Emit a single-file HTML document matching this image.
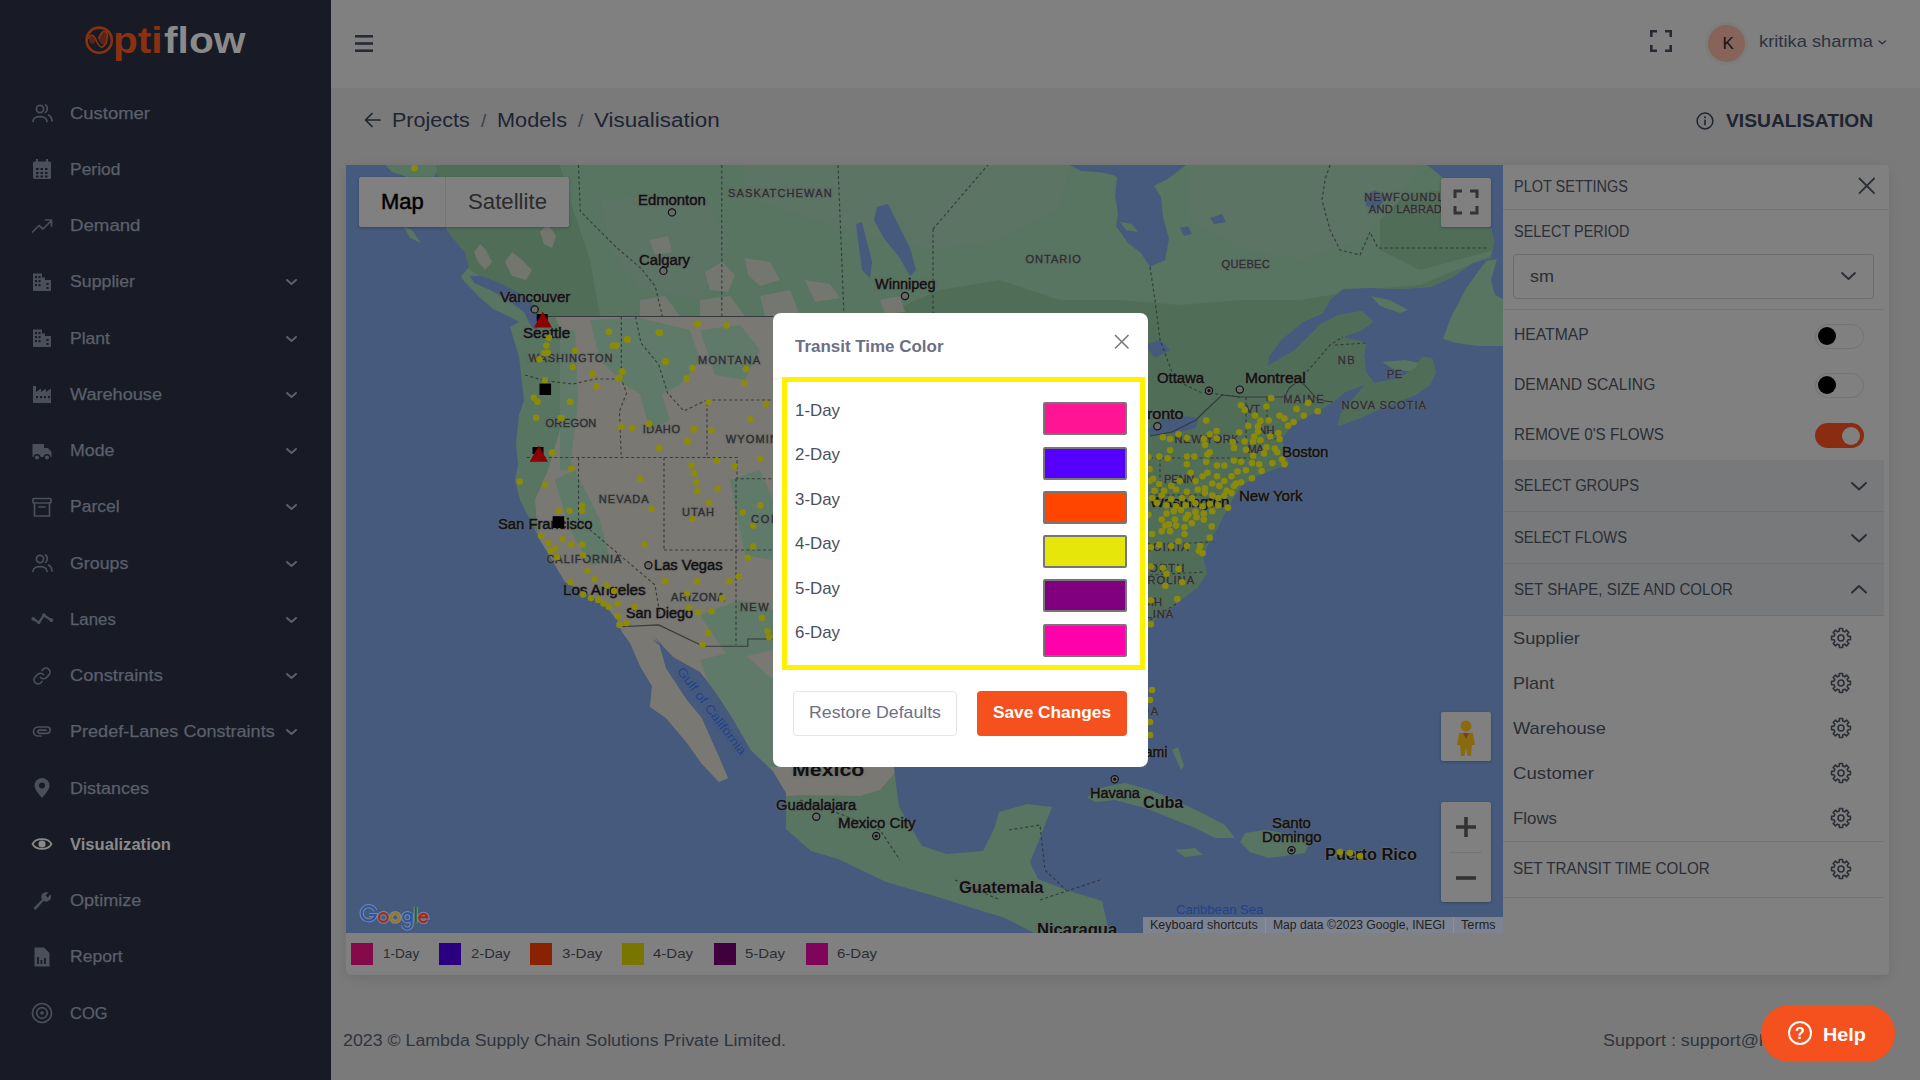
<!DOCTYPE html>
<html><head><meta charset="utf-8"><title>Optiflow - Visualisation</title>
<style>
html,body{margin:0;padding:0;width:1920px;height:1080px;overflow:hidden;background:#7a7a7a;font-family:"Liberation Sans",sans-serif}
.t{position:absolute;white-space:pre}
svg{position:absolute;overflow:visible}
</style></head><body>
<div id="sb" style="position:absolute;left:0;top:0;width:331px;height:1080px;background:#181b25"></div>
<svg style="left:85.00px;top:26.00px" width="29" height="29" viewBox="0 0 29 29"><circle cx="14.2" cy="14.2" r="12.6" fill="none" stroke="#8a3210" stroke-width="2.6"/><path d="M3.5 13 C5 7 9 9 11 14 C13 19 16 23 19 20 C22 17 24 9 21 6 C18 3 15 9 13.5 13" fill="none" stroke="#8a3210" stroke-width="1.6"/><path d="M4 12 C6 9 9 11 10.5 15 C9 19 6 18 4.5 16Z M13 12 C15 7 19 4 22 7 C24 10 22 17 19.5 20 C17 18 14 16 13 12Z" fill="#8a3210" opacity="0.55"/></svg><span class="t" style="left:112.50px;top:23.20px;font-family:'Liberation Sans';font-size:36px;line-height:36px;font-weight:700;color:#8a3210;transform-origin:0 30.60px;transform:scaleX(1.1254);">pti</span><span class="t" style="left:163.50px;top:23.20px;font-family:'Liberation Sans';font-size:36px;line-height:36px;font-weight:700;color:#8a8a8a;transform-origin:0 30.60px;transform:scaleX(1.1322);">flow</span>
<span class="t" style="left:70.00px;top:105.60px;font-family:'Liberation Sans';font-size:16px;line-height:16px;font-weight:400;color:#5b5f6b;transform-origin:0 13.60px;transform:scaleX(1.1534);-webkit-text-stroke:0.25px #5b5f6b;">Customer</span>
<svg style="left:31.00px;top:102.20px" width="22" height="22" viewBox="0 0 22 22"><circle cx="9" cy="7" r="3.6" fill="none" stroke="#4b4f5b" stroke-width="1.7" stroke-linecap="round" stroke-linejoin="round"/><path d="M2 19.5 C2 13 16 13 16 19.5" fill="none" stroke="#4b4f5b" stroke-width="1.7" stroke-linecap="round" stroke-linejoin="round"/><path d="M14.5 3 C17 4.5 17 9 14.5 10.5 M17.5 13 C20 14.5 21 17 21 19" fill="none" stroke="#4b4f5b" stroke-width="1.7" stroke-linecap="round" stroke-linejoin="round"/></svg>
<span class="t" style="left:70.00px;top:161.85px;font-family:'Liberation Sans';font-size:16px;line-height:16px;font-weight:400;color:#5b5f6b;transform-origin:0 13.60px;transform:scaleX(1.0919);-webkit-text-stroke:0.25px #5b5f6b;">Period</span>
<svg style="left:31.00px;top:158.45px" width="22" height="22" viewBox="0 0 22 22"><rect x="2" y="3.5" width="18" height="17.5" rx="1.5" fill="#4b4f5b"/><rect x="5" y="1" width="2" height="4" fill="#4b4f5b"/><rect x="15" y="1" width="2" height="4" fill="#4b4f5b"/><rect x="5" y="10" width="2.5" height="2" fill="#181b25"/><rect x="9.5" y="10" width="2.5" height="2" fill="#181b25"/><rect x="14" y="10" width="2.5" height="2" fill="#181b25"/><rect x="5" y="14" width="2.5" height="2" fill="#181b25"/><rect x="9.5" y="14" width="2.5" height="2" fill="#181b25"/><rect x="14" y="14" width="2.5" height="2" fill="#181b25"/><rect x="5" y="17.5" width="2.5" height="2" fill="#181b25"/><rect x="9.5" y="17.5" width="2.5" height="2" fill="#181b25"/><rect x="14" y="17.5" width="2.5" height="2" fill="#181b25"/></svg>
<span class="t" style="left:70.00px;top:218.10px;font-family:'Liberation Sans';font-size:16px;line-height:16px;font-weight:400;color:#5b5f6b;transform-origin:0 13.60px;transform:scaleX(1.1656);-webkit-text-stroke:0.25px #5b5f6b;">Demand</span>
<svg style="left:31.00px;top:214.70px" width="22" height="22" viewBox="0 0 22 22"><path d="M1.5 17 L8 10.5 L12 14 L20 6 M14.5 5 H20.5 V11" fill="none" stroke="#4b4f5b" stroke-width="1.7" stroke-linecap="round" stroke-linejoin="round"/></svg>
<span class="t" style="left:70.00px;top:274.35px;font-family:'Liberation Sans';font-size:16px;line-height:16px;font-weight:400;color:#5b5f6b;transform-origin:0 13.60px;transform:scaleX(1.1073);-webkit-text-stroke:0.25px #5b5f6b;">Supplier</span>
<svg style="left:31.00px;top:270.95px" width="22" height="22" viewBox="0 0 22 22"><path d="M2 20 V2.5 H11 V6.5 H14 V9 H20 V20Z" fill="#4b4f5b"/><rect x="4" y="5" width="2" height="2.2" fill="#181b25"/><rect x="7.5" y="5" width="2" height="2.2" fill="#181b25"/><rect x="4" y="9" width="2" height="2.2" fill="#181b25"/><rect x="7.5" y="9" width="2" height="2.2" fill="#181b25"/><rect x="4" y="13" width="2" height="2.2" fill="#181b25"/><rect x="7.5" y="13" width="2" height="2.2" fill="#181b25"/><rect x="15.5" y="12" width="2" height="2" fill="#181b25"/><rect x="15.5" y="16" width="2" height="2" fill="#181b25"/></svg>
<svg style="left:285.80px;top:279.40px" width="11" height="6.5" viewBox="0 0 11 6.5"><path d="M1 1 L5.50 5.00 L10.00 1" fill="none" stroke="#5b5f6b" stroke-width="2" stroke-linecap="round" stroke-linejoin="round"/></svg>
<span class="t" style="left:70.00px;top:330.60px;font-family:'Liberation Sans';font-size:16px;line-height:16px;font-weight:400;color:#5b5f6b;transform-origin:0 13.60px;transform:scaleX(1.0968);-webkit-text-stroke:0.25px #5b5f6b;">Plant</span>
<svg style="left:31.00px;top:327.20px" width="22" height="22" viewBox="0 0 22 22"><path d="M2 20 V2.5 H11 V6.5 H14 V9 H20 V20Z" fill="#4b4f5b"/><rect x="4" y="5" width="2" height="2.2" fill="#181b25"/><rect x="7.5" y="5" width="2" height="2.2" fill="#181b25"/><rect x="4" y="9" width="2" height="2.2" fill="#181b25"/><rect x="7.5" y="9" width="2" height="2.2" fill="#181b25"/><rect x="4" y="13" width="2" height="2.2" fill="#181b25"/><rect x="7.5" y="13" width="2" height="2.2" fill="#181b25"/><rect x="15.5" y="12" width="2" height="2" fill="#181b25"/><rect x="15.5" y="16" width="2" height="2" fill="#181b25"/></svg>
<svg style="left:285.80px;top:335.65px" width="11" height="6.5" viewBox="0 0 11 6.5"><path d="M1 1 L5.50 5.00 L10.00 1" fill="none" stroke="#5b5f6b" stroke-width="2" stroke-linecap="round" stroke-linejoin="round"/></svg>
<span class="t" style="left:70.00px;top:386.85px;font-family:'Liberation Sans';font-size:16px;line-height:16px;font-weight:400;color:#5b5f6b;transform-origin:0 13.60px;transform:scaleX(1.1325);-webkit-text-stroke:0.25px #5b5f6b;">Warehouse</span>
<svg style="left:31.00px;top:383.45px" width="22" height="22" viewBox="0 0 22 22"><path d="M2 20 V3 H5 V9 L10 5.5 V9 L15 5.5 V9 L20 5.5 V20Z" fill="#4b4f5b"/><rect x="5" y="13" width="2" height="2.2" fill="#181b25"/><rect x="9" y="13" width="2" height="2.2" fill="#181b25"/><rect x="13" y="13" width="2" height="2.2" fill="#181b25"/><rect x="17" y="13" width="2" height="2.2" fill="#181b25"/></svg>
<svg style="left:285.80px;top:391.90px" width="11" height="6.5" viewBox="0 0 11 6.5"><path d="M1 1 L5.50 5.00 L10.00 1" fill="none" stroke="#5b5f6b" stroke-width="2" stroke-linecap="round" stroke-linejoin="round"/></svg>
<span class="t" style="left:70.00px;top:443.10px;font-family:'Liberation Sans';font-size:16px;line-height:16px;font-weight:400;color:#5b5f6b;transform-origin:0 13.60px;transform:scaleX(1.1091);-webkit-text-stroke:0.25px #5b5f6b;">Mode</span>
<svg style="left:31.00px;top:439.70px" width="22" height="22" viewBox="0 0 22 22"><path d="M1.5 4 H13 V8 H17 L20.5 12 V17 H1.5Z" fill="#4b4f5b"/><circle cx="6" cy="17.5" r="2.8" fill="#4b4f5b" stroke="#181b25" stroke-width="1.5"/><circle cx="16" cy="17.5" r="2.8" fill="#4b4f5b" stroke="#181b25" stroke-width="1.5"/></svg>
<svg style="left:285.80px;top:448.15px" width="11" height="6.5" viewBox="0 0 11 6.5"><path d="M1 1 L5.50 5.00 L10.00 1" fill="none" stroke="#5b5f6b" stroke-width="2" stroke-linecap="round" stroke-linejoin="round"/></svg>
<span class="t" style="left:70.00px;top:499.35px;font-family:'Liberation Sans';font-size:16px;line-height:16px;font-weight:400;color:#5b5f6b;transform-origin:0 13.60px;transform:scaleX(1.0957);-webkit-text-stroke:0.25px #5b5f6b;">Parcel</span>
<svg style="left:31.00px;top:495.95px" width="22" height="22" viewBox="0 0 22 22"><rect x="2" y="2.5" width="18" height="4.5" rx="1" fill="none" stroke="#4b4f5b" stroke-width="1.7" stroke-linecap="round" stroke-linejoin="round"/><path d="M3.5 7 V20 H18.5 V7 M8 11 H14" fill="none" stroke="#4b4f5b" stroke-width="1.7" stroke-linecap="round" stroke-linejoin="round"/></svg>
<svg style="left:285.80px;top:504.40px" width="11" height="6.5" viewBox="0 0 11 6.5"><path d="M1 1 L5.50 5.00 L10.00 1" fill="none" stroke="#5b5f6b" stroke-width="2" stroke-linecap="round" stroke-linejoin="round"/></svg>
<span class="t" style="left:70.00px;top:555.60px;font-family:'Liberation Sans';font-size:16px;line-height:16px;font-weight:400;color:#5b5f6b;transform-origin:0 13.60px;transform:scaleX(1.1111);-webkit-text-stroke:0.25px #5b5f6b;">Groups</span>
<svg style="left:31.00px;top:552.20px" width="22" height="22" viewBox="0 0 22 22"><circle cx="9" cy="7" r="3.6" fill="none" stroke="#4b4f5b" stroke-width="1.7" stroke-linecap="round" stroke-linejoin="round"/><path d="M2 19.5 C2 13 16 13 16 19.5" fill="none" stroke="#4b4f5b" stroke-width="1.7" stroke-linecap="round" stroke-linejoin="round"/><path d="M14.5 3 C17 4.5 17 9 14.5 10.5 M17.5 13 C20 14.5 21 17 21 19" fill="none" stroke="#4b4f5b" stroke-width="1.7" stroke-linecap="round" stroke-linejoin="round"/></svg>
<svg style="left:285.80px;top:560.65px" width="11" height="6.5" viewBox="0 0 11 6.5"><path d="M1 1 L5.50 5.00 L10.00 1" fill="none" stroke="#5b5f6b" stroke-width="2" stroke-linecap="round" stroke-linejoin="round"/></svg>
<span class="t" style="left:70.00px;top:611.85px;font-family:'Liberation Sans';font-size:16px;line-height:16px;font-weight:400;color:#5b5f6b;transform-origin:0 13.60px;transform:scaleX(1.0506);-webkit-text-stroke:0.25px #5b5f6b;">Lanes</span>
<svg style="left:31.00px;top:608.45px" width="22" height="22" viewBox="0 0 22 22"><path d="M2.3 10.8 L7.9 14.6 L12.9 7.2 L20.4 12.2" fill="none" stroke="#4b4f5b" stroke-width="2.3" stroke-linejoin="round"/><circle cx="2.3" cy="10.8" r="1.9" fill="#4b4f5b"/><circle cx="12.9" cy="7.2" r="1.9" fill="#4b4f5b"/><circle cx="20.4" cy="12.2" r="1.9" fill="#4b4f5b"/><circle cx="7.9" cy="14.6" r="1.6" fill="#4b4f5b"/></svg>
<svg style="left:285.80px;top:616.90px" width="11" height="6.5" viewBox="0 0 11 6.5"><path d="M1 1 L5.50 5.00 L10.00 1" fill="none" stroke="#5b5f6b" stroke-width="2" stroke-linecap="round" stroke-linejoin="round"/></svg>
<span class="t" style="left:70.00px;top:668.10px;font-family:'Liberation Sans';font-size:16px;line-height:16px;font-weight:400;color:#5b5f6b;transform-origin:0 13.60px;transform:scaleX(1.1468);-webkit-text-stroke:0.25px #5b5f6b;">Constraints</span>
<svg style="left:31.00px;top:664.70px" width="22" height="22" viewBox="0 0 22 22"><path d="M9.5 12.5 A4 4 0 0 0 15 12.8 L18 9.8 A4 4 0 0 0 12.3 4.2 L11 5.5 M12.5 9.5 A4 4 0 0 0 7 9.2 L4 12.2 A4 4 0 0 0 9.7 17.8 L11 16.5" fill="none" stroke="#4b4f5b" stroke-width="1.7" stroke-linecap="round" stroke-linejoin="round"/></svg>
<svg style="left:285.80px;top:673.15px" width="11" height="6.5" viewBox="0 0 11 6.5"><path d="M1 1 L5.50 5.00 L10.00 1" fill="none" stroke="#5b5f6b" stroke-width="2" stroke-linecap="round" stroke-linejoin="round"/></svg>
<span class="t" style="left:70.00px;top:724.35px;font-family:'Liberation Sans';font-size:16px;line-height:16px;font-weight:400;color:#5b5f6b;transform-origin:0 13.60px;transform:scaleX(1.1282);-webkit-text-stroke:0.25px #5b5f6b;">Predef-Lanes Constraints</span>
<svg style="left:31.00px;top:720.95px" width="22" height="22" viewBox="0 0 22 22"><path d="M10 15 H7 A4.5 4.5 0 0 1 7 6 H16 A3.2 3.2 0 0 1 16 12.4 H8.5 A1.6 1.6 0 0 1 8.5 9.2 H15" fill="none" stroke="#4b4f5b" stroke-width="1.7" stroke-linecap="round" stroke-linejoin="round"/></svg>
<svg style="left:285.80px;top:729.40px" width="11" height="6.5" viewBox="0 0 11 6.5"><path d="M1 1 L5.50 5.00 L10.00 1" fill="none" stroke="#5b5f6b" stroke-width="2" stroke-linecap="round" stroke-linejoin="round"/></svg>
<span class="t" style="left:70.00px;top:780.60px;font-family:'Liberation Sans';font-size:16px;line-height:16px;font-weight:400;color:#5b5f6b;transform-origin:0 13.60px;transform:scaleX(1.1231);-webkit-text-stroke:0.25px #5b5f6b;">Distances</span>
<svg style="left:31.00px;top:777.20px" width="22" height="22" viewBox="0 0 22 22"><path d="M11 21 C6 15 3.5 11.5 3.5 8.5 A7.5 7.5 0 0 1 18.5 8.5 C18.5 11.5 16 15 11 21Z" fill="#4b4f5b"/><circle cx="11" cy="8.5" r="3" fill="#181b25"/></svg>
<span class="t" style="left:70.00px;top:836.85px;font-family:'Liberation Sans';font-size:16px;line-height:16px;font-weight:600;color:#8a8a8a;transform-origin:0 13.60px;transform:scaleX(1.0357);">Visualization</span>
<svg style="left:31.00px;top:833.45px" width="22" height="22" viewBox="0 0 22 22"><path d="M1.5 11 C5 4.5 17 4.5 20.5 11 C17 17.5 5 17.5 1.5 11Z" fill="none" stroke="#8a8a8a" stroke-width="1.7" stroke-linecap="round" stroke-linejoin="round" stroke-width="2.2"/><circle cx="11" cy="11" r="3.6" fill="#8a8a8a"/></svg>
<span class="t" style="left:70.00px;top:893.10px;font-family:'Liberation Sans';font-size:16px;line-height:16px;font-weight:400;color:#5b5f6b;transform-origin:0 13.60px;transform:scaleX(1.1295);-webkit-text-stroke:0.25px #5b5f6b;">Optimize</span>
<svg style="left:31.00px;top:889.70px" width="22" height="22" viewBox="0 0 22 22"><path d="M2.5 18 L11 9.5 A5 5 0 0 1 17.5 2.5 L14.5 5.5 L16.5 7.5 L19.5 4.5 A5 5 0 0 1 12.5 11 L4.5 20Z" fill="#4b4f5b"/></svg>
<span class="t" style="left:70.00px;top:949.35px;font-family:'Liberation Sans';font-size:16px;line-height:16px;font-weight:400;color:#5b5f6b;transform-origin:0 13.60px;transform:scaleX(1.0951);-webkit-text-stroke:0.25px #5b5f6b;">Report</span>
<svg style="left:31.00px;top:945.95px" width="22" height="22" viewBox="0 0 22 22"><path d="M3.5 1.5 H13 L18.5 7 V20.5 H3.5Z" fill="#4b4f5b"/><rect x="6" y="11" width="1.8" height="7" fill="#181b25"/><rect x="9.5" y="14" width="1.8" height="4" fill="#181b25"/><rect x="13" y="12" width="1.8" height="6" fill="#181b25"/></svg>
<span class="t" style="left:70.00px;top:1005.60px;font-family:'Liberation Sans';font-size:16px;line-height:16px;font-weight:400;color:#5b5f6b;transform-origin:0 13.60px;transform:scaleX(1.0315);-webkit-text-stroke:0.25px #5b5f6b;">COG</span>
<svg style="left:31.00px;top:1002.20px" width="22" height="22" viewBox="0 0 22 22"><circle cx="11" cy="11" r="9.5" fill="none" stroke="#4b4f5b" stroke-width="1.7" stroke-linecap="round" stroke-linejoin="round"/><circle cx="11" cy="11" r="5.3" fill="none" stroke="#4b4f5b" stroke-width="1.7" stroke-linecap="round" stroke-linejoin="round"/><circle cx="11" cy="11" r="1.8" fill="#4b4f5b"/></svg>
<div style="position:absolute;left:331px;top:0;width:1589px;height:88px;background:#808080"></div>
<div style="position:absolute;left:331px;top:88px;width:1589px;height:992px;background:#7a7a7a"></div>
<svg style="left:354.00px;top:34.00px" width="20" height="18" viewBox="0 0 20 18"><rect x="1" y="1.00" width="18" height="2.6" fill="#262a35"/><rect x="1" y="8.20" width="18" height="2.6" fill="#262a35"/><rect x="1" y="15.40" width="18" height="2.6" fill="#262a35"/></svg>
<svg style="left:1649.50px;top:29.50px" width="22" height="22" viewBox="0 0 22 22"><path d="M1.3 7 V1.3 H7 M15 1.3 H20.7 V7 M20.7 15 V20.7 H15 M7 20.7 H1.3 V15" fill="none" stroke="#262a35" stroke-width="2.6"/></svg>
<div style="position:absolute;left:1705px;top:22px;width:43px;height:43px;border-radius:50%;background:#7c7c7c"></div>
<div style="position:absolute;left:1708px;top:25px;width:37px;height:37px;border-radius:50%;background:#866459"></div>
<span class="t" style="left:1722.60px;top:35.35px;font-family:'Liberation Sans';font-size:17px;line-height:17px;font-weight:400;color:#141414;">K</span>
<span class="t" style="left:1759.00px;top:33.45px;font-family:'Liberation Sans';font-size:17px;line-height:17px;font-weight:400;color:#2d3240;transform-origin:0 14.45px;transform:scaleX(1.0774);">kritika sharma</span>
<svg style="left:1877.55px;top:39.58px" width="8.5" height="5.25" viewBox="0 0 8.5 5.25"><path d="M1 1 L4.25 3.75 L7.50 1" fill="none" stroke="#2d3240" stroke-width="1.5" stroke-linecap="round" stroke-linejoin="round"/></svg>
<svg style="left:363.50px;top:112.00px" width="17" height="16" viewBox="0 0 17 16"><path d="M16 8 H1.5 M8 1.5 L1.5 8 L8 14.5" fill="none" stroke="#1f2431" stroke-width="1.7" stroke-linecap="round" stroke-linejoin="round"/></svg>
<span class="t" style="left:392.00px;top:110.00px;font-family:'Liberation Sans';font-size:20px;line-height:20px;font-weight:400;color:#1f2431;transform-origin:0 17.00px;transform:scaleX(1.0768);">Projects</span>
<span class="t" style="left:481.00px;top:110.85px;font-family:'Liberation Sans';font-size:19px;line-height:19px;font-weight:400;color:#3a3f4b;">/</span>
<span class="t" style="left:496.50px;top:110.00px;font-family:'Liberation Sans';font-size:20px;line-height:20px;font-weight:400;color:#1f2431;transform-origin:0 17.00px;transform:scaleX(1.0855);">Models</span>
<span class="t" style="left:578.00px;top:110.85px;font-family:'Liberation Sans';font-size:19px;line-height:19px;font-weight:400;color:#3a3f4b;">/</span>
<span class="t" style="left:593.60px;top:110.00px;font-family:'Liberation Sans';font-size:20px;line-height:20px;font-weight:400;color:#1f2431;transform-origin:0 17.00px;transform:scaleX(1.1229);">Visualisation</span>
<svg style="left:1696.00px;top:112.00px" width="18" height="18" viewBox="0 0 18 18"><circle cx="9" cy="9" r="7.9" fill="none" stroke="#1f2431" stroke-width="1.5"/><rect x="8.2" y="7.6" width="1.6" height="5.6" fill="#1f2431"/><circle cx="9" cy="5.3" r="1" fill="#1f2431"/></svg>
<span class="t" style="left:1725.80px;top:110.75px;font-family:'Liberation Sans';font-size:19px;line-height:19px;font-weight:700;color:#1f2431;transform-origin:0 16.15px;transform:scaleX(1.0129);">VISUALISATION</span>
<div style="position:absolute;left:346px;top:165px;width:1543px;height:810px;border-radius:6px;box-shadow:0 3px 12px rgba(0,0,0,0.09)"></div>
<svg style="left:346px;top:165px" width="1157" height="768" viewBox="346 165 1157 768"><defs><clipPath id="landclip"><path d="M436 165 L440 195 L445 227 L452 237 L465 252 L469 267 L461 276 L463 280 L478 296 L493 309 L510 317 L519 322 L510 327 L513 337 L519 356 L521 374 L524 400 L519 415 L516 443 L518 465 L515 480 L520 500 L530 520 L540 540 L552 560 L565 582 L590 595 L605 605 L617 620 L622 632 L630 643 L641 668 L652 686 L650 707 L666 718 L687 743 L702 764 L719 782 L728 778 L716 750 L702 718 L687 700 L666 668 L659 643 L652 634 L673 657 L702 675 L716 693 L734 721 L751 750 L773 771 L786 793 L786 829 L811 851 L838 859 L886 882 L941 898 L969 907 L1005 918 L1038 935 L1110 935 L1102 901 L1066 890 L1038 879 L1030 862 L1038 843 L1052 807 L1027 804 L999 812 L994 829 L983 851 L947 854 L922 846 L899 807 L894 768 L900 740 L1140 740 L1146 770 L1147 700 L1147 640 L1147 628 L1154 621 L1176 604 L1198 587 L1207 573 L1203 558 L1210 539 L1217 529 L1224 515 L1232 500 L1241 486 L1256 476 L1275 469 L1289 464 L1284 452 L1282 438 L1294 423 L1318 411 L1333 402 L1345 392 L1366 384 L1352 400 L1340 415 L1338 426 L1360 418 L1390 405 L1415 395 L1430 385 L1436 372 L1432 358 L1422 357 L1415 368 L1400 378 L1374 383 L1366 372 L1364 355 L1366 343 L1343 337 L1362 330 L1373 322 L1362 311 L1338 315 L1321 324 L1295 350 L1268 366 L1269 356 L1282 339 L1303 322 L1323 313 L1330 300 L1343 289 L1369 288 L1401 289 L1430 287 L1451 278 L1473 263 L1491 258 L1494 241 L1491 228 L1441 176 L1427 165 L1186 165 L1169 178 L1154 186 L1161 197 L1163 217 L1169 239 L1165 260 L1150 267 L1141 253 L1128 243 L1116 226 L1118 214 L1115 196 L1117 178 L1112 173 L1081 171 L1070 165Z"/></clipPath></defs><rect x="346" y="165" width="1157" height="768" fill="#465a7d"/><path d="M436 165 L440 195 L445 227 L452 237 L465 252 L469 267 L461 276 L463 280 L478 296 L493 309 L510 317 L519 322 L510 327 L513 337 L519 356 L521 374 L524 400 L519 415 L516 443 L518 465 L515 480 L520 500 L530 520 L540 540 L552 560 L565 582 L590 595 L605 605 L617 620 L622 632 L630 643 L641 668 L652 686 L650 707 L666 718 L687 743 L702 764 L719 782 L728 778 L716 750 L702 718 L687 700 L666 668 L659 643 L652 634 L673 657 L702 675 L716 693 L734 721 L751 750 L773 771 L786 793 L786 829 L811 851 L838 859 L886 882 L941 898 L969 907 L1005 918 L1038 935 L1110 935 L1102 901 L1066 890 L1038 879 L1030 862 L1038 843 L1052 807 L1027 804 L999 812 L994 829 L983 851 L947 854 L922 846 L899 807 L894 768 L900 740 L1140 740 L1146 770 L1147 700 L1147 640 L1147 628 L1154 621 L1176 604 L1198 587 L1207 573 L1203 558 L1210 539 L1217 529 L1224 515 L1232 500 L1241 486 L1256 476 L1275 469 L1289 464 L1284 452 L1282 438 L1294 423 L1318 411 L1333 402 L1345 392 L1366 384 L1352 400 L1340 415 L1338 426 L1360 418 L1390 405 L1415 395 L1430 385 L1436 372 L1432 358 L1422 357 L1415 368 L1400 378 L1374 383 L1366 372 L1364 355 L1366 343 L1343 337 L1362 330 L1373 322 L1362 311 L1338 315 L1321 324 L1295 350 L1268 366 L1269 356 L1282 339 L1303 322 L1323 313 L1330 300 L1343 289 L1369 288 L1401 289 L1430 287 L1451 278 L1473 263 L1491 258 L1494 241 L1491 228 L1441 176 L1427 165 L1186 165 L1169 178 L1154 186 L1161 197 L1163 217 L1169 239 L1165 260 L1150 267 L1141 253 L1128 243 L1116 226 L1118 214 L1115 196 L1117 178 L1112 173 L1081 171 L1070 165Z" fill="#577560"/><path d="M1443 339 L1451 317 L1467 287 L1486 261 L1497 259 L1491 280 L1495 295 L1505 300 L1505 346 L1478 346 L1456 343Z" fill="#577560"/><path d="M385 165 L440 165 L432 182 L410 178 L392 172Z" fill="#577560"/><path d="M1087 797 L1100 788 L1125 783 L1150 790 L1175 800 L1200 812 L1225 825 L1235 838 L1215 838 L1195 828 L1170 818 L1145 808 L1115 800 L1095 802Z" fill="#577560"/><path d="M1245 833 L1265 830 L1290 834 L1310 842 L1305 853 L1285 856 L1268 858 L1250 852 L1240 842Z" fill="#577560"/><path d="M1330 853 L1355 851 L1362 856 L1340 860Z" fill="#577560"/><path d="M1175 850 L1195 848 L1203 855 L1185 857Z" fill="#577560"/><path d="M1172 750 L1178 747 L1184 766 L1181 770Z" fill="#577560"/><path d="M1382 362 L1405 360 L1434 366 L1420 372 L1395 370Z" fill="#577560"/><path d="M1371 296 L1390 300 L1408 310 L1400 313 L1380 306Z" fill="#577560"/><path d="M1120 222 L1132 224 L1138 232 L1126 230Z" fill="#577560"/><path d="M404 227 L412 230 L421 243 L410 238Z" fill="#577560"/><g clip-path="url(#landclip)"><path d="M436 165 L560 165 L570 200 L590 260 L600 316 L540 316 L520 300 L470 270 L445 230Z" fill="#506e57"/><path d="M880 316 L940 290 L1000 280 L1060 300 L1120 300 L1180 305 L1240 300 L1300 300 L1360 290 L1420 285 L1505 250 L1505 420 L1400 440 L1300 480 L1250 520 L1200 600 L1150 650 L1140 740 L880 740Z" fill="#506e57"/><path d="M1380 200 L1440 190 L1494 220 L1494 250 L1420 270 L1380 250Z" fill="#506e57"/><path d="M740 165 L1070 165 L1060 210 L1000 240 L930 250 L860 235 L800 215 L750 200Z" fill="#5b7463"/><path d="M1190 165 L1420 165 L1400 200 L1360 240 L1300 260 L1240 250 L1190 220Z" fill="#5b7463"/><path d="M600 200 L700 190 L730 240 L700 300 L640 290 L610 250Z" fill="#5b7463"/><path d="M555 316 L773 316 L773 767 L900 767 L880 790 L860 796 L800 795 L735 800 L700 790 L640 700 L615 640 L560 590 L540 560 L535 500 L548 470 L560 430 L560 380 L565 340Z" fill="#7a7873"/><path d="M705 272 L722 262 L735 275 L728 292 L710 290Z" fill="#7a7873" opacity="0.8"/><path d="M745 258 L770 262 L780 280 L760 286 L748 275Z" fill="#7a7873" opacity="0.8"/><path d="M700 300 L730 296 L745 316 L700 316Z" fill="#7a7873" opacity="0.8"/><path d="M760 296 L790 290 L800 316 L765 316Z" fill="#7a7873" opacity="0.8"/><path d="M640 300 L665 296 L680 316 L640 316Z" fill="#7a7873" opacity="0.8"/><path d="M805 280 L830 284 L840 298 L815 302Z" fill="#7a7873" opacity="0.8"/><path d="M650 240 L668 236 L672 252 L655 255Z" fill="#7a7873" opacity="0.8"/><path d="M880 300 L900 296 L905 312 L885 314Z" fill="#7a7873" opacity="0.8"/><path d="M474 252 L480 244 L486 250 L492 262 L485 270 L478 262Z" fill="#7a7873" opacity="0.8"/><path d="M505 262 L512 252 L520 258 L532 270 L526 280 L512 276Z" fill="#7a7873" opacity="0.8"/><path d="M540 232 L548 224 L556 236 L552 248 L544 244Z" fill="#7a7873" opacity="0.8"/><path d="M590 320 L640 318 L690 330 L700 360 L680 385 L650 400 L625 385 L600 360Z" fill="#5f7a69"/><path d="M700 330 L740 325 L760 350 L745 380 L715 375Z" fill="#5f7a69"/><path d="M560 330 L575 330 L578 400 L570 470 L560 470Z" fill="#5f7a69"/><path d="M555 480 L575 470 L600 520 L610 560 L590 565 L570 530Z" fill="#5f7a69"/><path d="M730 480 L760 470 L773 500 L773 560 L745 555Z" fill="#5f7a69"/><path d="M700 615 L740 600 L773 610 L773 650 L730 660Z" fill="#5f7a69"/><path d="M640 395 L660 390 L670 420 L650 430Z" fill="#5f7a69"/><path d="M700 660 L740 650 L773 680 L773 767 L760 767 L735 725 L715 700Z" fill="#5f7a69"/></g><path d="M652 639 L673 657 L700 672 L716 693 L734 721 L750 750 L735 760 L716 750 L702 718 L687 700 L666 668 L659 643Z" fill="#465a7d"/><path d="M877 207 L888 204 L899 226 L910 248 L916 270 L910 276 L899 257 L883 237 L874 220Z" fill="#465a7d"/><path d="M856 224 L862 222 L872 262 L870 278 L862 270Z" fill="#465a7d"/><path d="M1148 430 L1160 420 L1185 416 L1198 418 L1196 428 L1175 433 L1150 436Z" fill="#465a7d"/><path d="M470 276 L482 276 L502 284 L522 295 L535 305 L540 318 L536 332 L530 324 L524 312 L508 300 L490 290 L474 283Z" fill="#465a7d"/><path d="M1071 165 L1117 165 L1117 176Z" fill="#465a7d"/><path d="M1365 196 L1375 190 L1385 198 L1378 210 L1366 206Z" fill="#465a7d"/><path d="M1180 228 L1188 226 L1192 234 L1184 236Z" fill="#465a7d"/><path d="M1210 218 L1222 214 L1226 222 L1214 224Z" fill="#465a7d"/><path d="M1145 345 L1160 340 L1170 350 L1155 358Z" fill="#465a7d"/><path d="M538 316.5 H773" fill="none" stroke="#35393b" stroke-width="1.1"/><path d="M578.5 165 L580.3 211.3 L594.6 225.6 L616 247 L641 268.4 L655.2 286.2 L662.3 316" fill="none" stroke="#2e3133" stroke-width="1.1" stroke-dasharray="3 2.5" opacity="0.85"/><path d="M721.8 165 V316 M838 165 L844 316 M933 229 V316 M933 229 L988 165" fill="none" stroke="#2e3133" stroke-width="1.1" stroke-dasharray="3 2.5" opacity="0.85"/><path d="M1150 267 L1155 300 L1160 340 L1175 380 L1200 392 L1240 397" fill="none" stroke="#2e3133" stroke-width="1.1" stroke-dasharray="3 2.5" opacity="0.85"/><path d="M1330 165 L1325 180 L1322 200 L1330 230 L1340 250 L1360 255 L1370 232 L1378 248 L1392 248 L1488 248" fill="none" stroke="#2e3133" stroke-width="1.1" stroke-dasharray="3 2.5" opacity="0.85"/><path d="M525 375 L544.6 380.7 L573 384 L594.6 379 L621.3 379 M621.3 316.5 V379 L626.6 393 L619.5 411 L621.3 457.5" fill="none" stroke="#2e3133" stroke-width="1.1" stroke-dasharray="3 2.5" opacity="0.85"/><path d="M526.8 457.5 H707 M578.5 457.5 V520 L655 585 L660 615 M664 457.5 V550 M635.5 316.5 L641 343 L658.7 364.6 L667.6 393 L683.7 411 L707 400 V457.5 M707 400 H773 M707 457.5 H737 V478.7 H773 M736 478.7 V645 M664 550 H773" fill="none" stroke="#2e3133" stroke-width="1.1" stroke-dasharray="3 2.5" opacity="0.85"/><path d="M619.5 626.7 L658.7 624.9 L703.3 646.3 L747.8 646.3 L747.8 639 L773 639" fill="none" stroke="#35393b" stroke-width="1.1"/><path d="M1150 436 L1172 432 L1196 420 L1205 411 L1222 395 L1240 397 L1285 397 L1289 388 L1300 380 L1318 400 L1333 402" fill="none" stroke="#35393b" stroke-width="1.1"/><path d="M1246 397 V436 L1250 450 M1267 398 V440 L1282 438 M1150 458 H1250 M1160 458 V500 M1150 495 H1232 M1150 545 L1210 542 M1150 575 L1205 572 M1150 620 L1176 604" fill="none" stroke="#2e3133" stroke-width="1.1" stroke-dasharray="3 2.5" opacity="0.85"/><path d="M1300 380 L1330 345 L1343 337 M1335 345 L1366 343" fill="none" stroke="#2e3133" stroke-width="1.1" stroke-dasharray="3 2.5" opacity="0.85"/><path d="M1009 830 L1040 825 L1045 870 L1066 890 M955 880 L1000 900 M1040 900 L1100 880 M800 800 L830 810 L880 830 L900 860" fill="none" stroke="#2e3133" stroke-width="1.1" stroke-dasharray="3 2.5" opacity="0.85"/></svg>
<span class="t" style="left:638.00px;top:193.10px;font-family:'Liberation Sans';font-size:14px;line-height:14px;font-weight:400;color:#111;transform-origin:0 11.90px;transform:scaleX(1.0622);text-shadow:0 0 2px #6e6e6e,0 0 2px #6e6e6e;-webkit-text-stroke:0.45px #111">Edmonton</span><span class="t" style="left:728.00px;top:188.45px;font-family:'Liberation Sans';font-size:11px;line-height:11px;font-weight:400;color:#2c2f30;letter-spacing:1.138px;text-shadow:0 0 2px #6e6e6e,0 0 2px #6e6e6e;-webkit-text-stroke:0.35px #2c2f30">SASKATCHEWAN</span><span class="t" style="left:639.00px;top:252.90px;font-family:'Liberation Sans';font-size:14px;line-height:14px;font-weight:400;color:#111;transform-origin:0 11.90px;transform:scaleX(1.0570);text-shadow:0 0 2px #6e6e6e,0 0 2px #6e6e6e;-webkit-text-stroke:0.45px #111">Calgary</span><span class="t" style="left:875.00px;top:277.10px;font-family:'Liberation Sans';font-size:14px;line-height:14px;font-weight:400;color:#111;transform-origin:0 11.90px;transform:scaleX(1.0364);text-shadow:0 0 2px #6e6e6e,0 0 2px #6e6e6e;-webkit-text-stroke:0.45px #111">Winnipeg</span><span class="t" style="left:500.00px;top:290.10px;font-family:'Liberation Sans';font-size:14px;line-height:14px;font-weight:400;color:#111;transform-origin:0 11.90px;transform:scaleX(1.0667);text-shadow:0 0 2px #6e6e6e,0 0 2px #6e6e6e;-webkit-text-stroke:0.45px #111">Vancouver</span><span class="t" style="left:522.50px;top:326.10px;font-family:'Liberation Sans';font-size:14px;line-height:14px;font-weight:400;color:#111;transform-origin:0 11.90px;transform:scaleX(1.0804);text-shadow:0 0 2px #6e6e6e,0 0 2px #6e6e6e;-webkit-text-stroke:0.45px #111">Seattle</span><span class="t" style="left:528.60px;top:352.65px;font-family:'Liberation Sans';font-size:11px;line-height:11px;font-weight:400;color:#2c2f30;letter-spacing:0.959px;text-shadow:0 0 2px #6e6e6e,0 0 2px #6e6e6e;-webkit-text-stroke:0.35px #2c2f30">WASHINGTON</span><span class="t" style="left:698.00px;top:355.25px;font-family:'Liberation Sans';font-size:11px;line-height:11px;font-weight:400;color:#2c2f30;letter-spacing:1.302px;text-shadow:0 0 2px #6e6e6e,0 0 2px #6e6e6e;-webkit-text-stroke:0.35px #2c2f30">MONTANA</span><span class="t" style="left:545.40px;top:417.65px;font-family:'Liberation Sans';font-size:11px;line-height:11px;font-weight:400;color:#2c2f30;letter-spacing:0.399px;text-shadow:0 0 2px #6e6e6e,0 0 2px #6e6e6e;-webkit-text-stroke:0.35px #2c2f30">OREGON</span><span class="t" style="left:642.70px;top:423.65px;font-family:'Liberation Sans';font-size:11px;line-height:11px;font-weight:400;color:#2c2f30;letter-spacing:0.614px;text-shadow:0 0 2px #6e6e6e,0 0 2px #6e6e6e;-webkit-text-stroke:0.35px #2c2f30">IDAHO</span><span class="t" style="left:725.70px;top:433.65px;font-family:'Liberation Sans';font-size:11px;line-height:11px;font-weight:400;color:#2c2f30;letter-spacing:1.167px;text-shadow:0 0 2px #6e6e6e,0 0 2px #6e6e6e;-webkit-text-stroke:0.35px #2c2f30">WYOMING</span><span class="t" style="left:598.80px;top:493.65px;font-family:'Liberation Sans';font-size:11px;line-height:11px;font-weight:400;color:#2c2f30;letter-spacing:1.096px;text-shadow:0 0 2px #6e6e6e,0 0 2px #6e6e6e;-webkit-text-stroke:0.35px #2c2f30">NEVADA</span><span class="t" style="left:682.00px;top:506.65px;font-family:'Liberation Sans';font-size:11px;line-height:11px;font-weight:400;color:#2c2f30;letter-spacing:0.953px;text-shadow:0 0 2px #6e6e6e,0 0 2px #6e6e6e;-webkit-text-stroke:0.35px #2c2f30">UTAH</span><span class="t" style="left:751.00px;top:513.65px;font-family:'Liberation Sans';font-size:11px;line-height:11px;font-weight:400;color:#2c2f30;letter-spacing:1.719px;text-shadow:0 0 2px #6e6e6e,0 0 2px #6e6e6e;-webkit-text-stroke:0.35px #2c2f30">COLORADO</span><span class="t" style="left:497.60px;top:516.70px;font-family:'Liberation Sans';font-size:14px;line-height:14px;font-weight:400;color:#111;transform-origin:0 11.90px;transform:scaleX(1.0549);text-shadow:0 0 2px #6e6e6e,0 0 2px #6e6e6e;-webkit-text-stroke:0.45px #111">San Francisco</span><span class="t" style="left:546.40px;top:553.65px;font-family:'Liberation Sans';font-size:11px;line-height:11px;font-weight:400;color:#2c2f30;letter-spacing:0.987px;text-shadow:0 0 2px #6e6e6e,0 0 2px #6e6e6e;-webkit-text-stroke:0.35px #2c2f30">CALIFORNIA</span><span class="t" style="left:654.40px;top:558.40px;font-family:'Liberation Sans';font-size:14px;line-height:14px;font-weight:400;color:#111;transform-origin:0 11.90px;transform:scaleX(1.0476);text-shadow:0 0 2px #6e6e6e,0 0 2px #6e6e6e;-webkit-text-stroke:0.45px #111">Las Vegas</span><span class="t" style="left:563.00px;top:582.70px;font-family:'Liberation Sans';font-size:14px;line-height:14px;font-weight:400;color:#111;transform-origin:0 11.90px;transform:scaleX(1.0813);text-shadow:0 0 2px #6e6e6e,0 0 2px #6e6e6e;-webkit-text-stroke:0.45px #111">Los Angeles</span><span class="t" style="left:671.00px;top:591.65px;font-family:'Liberation Sans';font-size:11px;line-height:11px;font-weight:400;color:#2c2f30;letter-spacing:0.799px;text-shadow:0 0 2px #6e6e6e,0 0 2px #6e6e6e;-webkit-text-stroke:0.35px #2c2f30">ARIZONA</span><span class="t" style="left:625.60px;top:605.80px;font-family:'Liberation Sans';font-size:14px;line-height:14px;font-weight:400;color:#111;transform-origin:0 11.90px;transform:scaleX(1.0246);text-shadow:0 0 2px #6e6e6e,0 0 2px #6e6e6e;-webkit-text-stroke:0.45px #111">San Diego</span><span class="t" style="left:740.00px;top:601.95px;font-family:'Liberation Sans';font-size:11px;line-height:11px;font-weight:400;color:#2c2f30;letter-spacing:1.431px;text-shadow:0 0 2px #6e6e6e,0 0 2px #6e6e6e;-webkit-text-stroke:0.35px #2c2f30">NEW MEXICO</span><span class="t" style="left:676.00px;top:661.38px;font-family:'Liberation Sans';font-size:12.5px;line-height:12.5px;font-weight:400;color:#22428a;transform-origin:0 10.62px;transform:rotate(53deg) scaleX(1.1384);text-shadow:0 0 2px #4a5d80,0 0 2px #4a5d80">Gulf of California</span><span class="t" style="left:792.40px;top:759.85px;font-family:'Liberation Sans';font-size:19px;line-height:19px;font-weight:700;color:#111;transform-origin:0 16.15px;transform:scaleX(1.1238);text-shadow:0 0 2px #6e6e6e,0 0 2px #6e6e6e">Mexico</span><span class="t" style="left:776.40px;top:797.60px;font-family:'Liberation Sans';font-size:14px;line-height:14px;font-weight:400;color:#111;transform-origin:0 11.90px;transform:scaleX(1.0514);text-shadow:0 0 2px #6e6e6e,0 0 2px #6e6e6e;-webkit-text-stroke:0.45px #111">Guadalajara</span><span class="t" style="left:838.00px;top:816.10px;font-family:'Liberation Sans';font-size:14px;line-height:14px;font-weight:400;color:#111;transform-origin:0 11.90px;transform:scaleX(1.0697);text-shadow:0 0 2px #6e6e6e,0 0 2px #6e6e6e;-webkit-text-stroke:0.45px #111">Mexico City</span><span class="t" style="left:1089.70px;top:785.90px;font-family:'Liberation Sans';font-size:14px;line-height:14px;font-weight:400;color:#111;transform-origin:0 11.90px;transform:scaleX(1.0339);text-shadow:0 0 2px #6e6e6e,0 0 2px #6e6e6e;-webkit-text-stroke:0.45px #111">Havana</span><span class="t" style="left:1143.20px;top:794.90px;font-family:'Liberation Sans';font-size:16px;line-height:16px;font-weight:700;color:#111;transform-origin:0 13.60px;transform:scaleX(1.0075);text-shadow:0 0 2px #6e6e6e,0 0 2px #6e6e6e">Cuba</span><span class="t" style="left:1271.90px;top:815.50px;font-family:'Liberation Sans';font-size:14px;line-height:14px;font-weight:400;color:#111;transform-origin:0 11.90px;transform:scaleX(1.0603);text-shadow:0 0 2px #6e6e6e,0 0 2px #6e6e6e;-webkit-text-stroke:0.45px #111">Santo</span><span class="t" style="left:1262.00px;top:830.40px;font-family:'Liberation Sans';font-size:14px;line-height:14px;font-weight:400;color:#111;transform-origin:0 11.90px;transform:scaleX(1.0601);text-shadow:0 0 2px #6e6e6e,0 0 2px #6e6e6e;-webkit-text-stroke:0.45px #111">Domingo</span><span class="t" style="left:1325.00px;top:846.60px;font-family:'Liberation Sans';font-size:16px;line-height:16px;font-weight:700;color:#111;transform-origin:0 13.60px;transform:scaleX(1.0245);text-shadow:0 0 2px #6e6e6e,0 0 2px #6e6e6e">Puerto Rico</span><span class="t" style="left:958.90px;top:880.40px;font-family:'Liberation Sans';font-size:16px;line-height:16px;font-weight:700;color:#111;transform-origin:0 13.60px;transform:scaleX(1.0328);text-shadow:0 0 2px #6e6e6e,0 0 2px #6e6e6e">Guatemala</span><span class="t" style="left:1037.30px;top:922.40px;font-family:'Liberation Sans';font-size:16px;line-height:16px;font-weight:700;color:#111;transform-origin:0 13.60px;transform:scaleX(1.0365);text-shadow:0 0 2px #6e6e6e,0 0 2px #6e6e6e">Nicaragua</span><span class="t" style="left:1176.30px;top:902.55px;font-family:'Liberation Sans';font-size:13px;line-height:13px;font-weight:400;color:#22428a;transform-origin:0 11.05px;transform:scaleX(1.0077);">Caribbean Sea</span><span class="t" style="left:1025.50px;top:254.45px;font-family:'Liberation Sans';font-size:11px;line-height:11px;font-weight:400;color:#2c2f30;letter-spacing:1.001px;text-shadow:0 0 2px #6e6e6e,0 0 2px #6e6e6e;-webkit-text-stroke:0.35px #2c2f30">ONTARIO</span><span class="t" style="left:1221.60px;top:259.05px;font-family:'Liberation Sans';font-size:11px;line-height:11px;font-weight:400;color:#2c2f30;letter-spacing:0.326px;text-shadow:0 0 2px #6e6e6e,0 0 2px #6e6e6e;-webkit-text-stroke:0.35px #2c2f30">QUEBEC</span><span class="t" style="left:1364.20px;top:192.35px;font-family:'Liberation Sans';font-size:11px;line-height:11px;font-weight:400;color:#2c2f30;letter-spacing:1.080px;text-shadow:0 0 2px #6e6e6e,0 0 2px #6e6e6e;-webkit-text-stroke:0.35px #2c2f30">NEWFOUNDLAND</span><span class="t" style="left:1368.80px;top:203.65px;font-family:'Liberation Sans';font-size:11px;line-height:11px;font-weight:400;color:#2c2f30;letter-spacing:0.291px;text-shadow:0 0 2px #6e6e6e,0 0 2px #6e6e6e;-webkit-text-stroke:0.35px #2c2f30">AND LABRADOR</span><span class="t" style="left:1156.70px;top:371.30px;font-family:'Liberation Sans';font-size:14px;line-height:14px;font-weight:400;color:#111;transform-origin:0 11.90px;transform:scaleX(1.0618);text-shadow:0 0 2px #6e6e6e,0 0 2px #6e6e6e;-webkit-text-stroke:0.45px #111">Ottawa</span><span class="t" style="left:1245.00px;top:370.60px;font-family:'Liberation Sans';font-size:14px;line-height:14px;font-weight:400;color:#111;transform-origin:0 11.90px;transform:scaleX(1.1144);text-shadow:0 0 2px #6e6e6e,0 0 2px #6e6e6e;-webkit-text-stroke:0.45px #111">Montreal</span><span class="t" style="left:1130.00px;top:406.90px;font-family:'Liberation Sans';font-size:14px;line-height:14px;font-weight:400;color:#111;transform-origin:0 11.90px;transform:scaleX(1.1455);text-shadow:0 0 2px #6e6e6e,0 0 2px #6e6e6e;-webkit-text-stroke:0.45px #111">Toronto</span><span class="t" style="left:1337.80px;top:354.65px;font-family:'Liberation Sans';font-size:11px;line-height:11px;font-weight:400;color:#2c2f30;letter-spacing:1.519px;text-shadow:0 0 2px #6e6e6e,0 0 2px #6e6e6e;-webkit-text-stroke:0.35px #2c2f30">NB</span><span class="t" style="left:1386.70px;top:368.85px;font-family:'Liberation Sans';font-size:11px;line-height:11px;font-weight:400;color:#2c2f30;letter-spacing:0.613px;text-shadow:0 0 2px #6e6e6e,0 0 2px #6e6e6e;-webkit-text-stroke:0.35px #2c2f30">PE</span><span class="t" style="left:1341.40px;top:399.85px;font-family:'Liberation Sans';font-size:11px;line-height:11px;font-weight:400;color:#2c2f30;letter-spacing:1.073px;text-shadow:0 0 2px #6e6e6e,0 0 2px #6e6e6e;-webkit-text-stroke:0.35px #2c2f30">NOVA SCOTIA</span><span class="t" style="left:1283.30px;top:393.75px;font-family:'Liberation Sans';font-size:11px;line-height:11px;font-weight:400;color:#2c2f30;letter-spacing:1.364px;text-shadow:0 0 2px #6e6e6e,0 0 2px #6e6e6e;-webkit-text-stroke:0.35px #2c2f30">MAINE</span><span class="t" style="left:1246.00px;top:404.45px;font-family:'Liberation Sans';font-size:11px;line-height:11px;font-weight:400;color:#2c2f30;letter-spacing:-0.062px;text-shadow:0 0 2px #6e6e6e,0 0 2px #6e6e6e;-webkit-text-stroke:0.35px #2c2f30">VT</span><span class="t" style="left:1258.30px;top:424.65px;font-family:'Liberation Sans';font-size:11px;line-height:11px;font-weight:400;color:#2c2f30;letter-spacing:0.209px;text-shadow:0 0 2px #6e6e6e,0 0 2px #6e6e6e;-webkit-text-stroke:0.35px #2c2f30">NH</span><span class="t" style="left:1174.60px;top:434.45px;font-family:'Liberation Sans';font-size:11px;line-height:11px;font-weight:400;color:#2c2f30;letter-spacing:0.628px;text-shadow:0 0 2px #6e6e6e,0 0 2px #6e6e6e;-webkit-text-stroke:0.35px #2c2f30">NEW YORK</span><span class="t" style="left:1247.60px;top:444.45px;font-family:'Liberation Sans';font-size:11px;line-height:11px;font-weight:400;color:#2c2f30;letter-spacing:-0.500px;text-shadow:0 0 2px #6e6e6e,0 0 2px #6e6e6e;-webkit-text-stroke:0.35px #2c2f30">MA</span><span class="t" style="left:1281.50px;top:444.70px;font-family:'Liberation Sans';font-size:14px;line-height:14px;font-weight:400;color:#111;transform-origin:0 11.90px;transform:scaleX(1.0644);text-shadow:0 0 2px #6e6e6e,0 0 2px #6e6e6e;-webkit-text-stroke:0.45px #111">Boston</span><span class="t" style="left:1163.90px;top:473.65px;font-family:'Liberation Sans';font-size:11px;line-height:11px;font-weight:400;color:#2c2f30;letter-spacing:-0.087px;text-shadow:0 0 2px #6e6e6e,0 0 2px #6e6e6e;-webkit-text-stroke:0.35px #2c2f30">PENN</span><span class="t" style="left:1239.40px;top:488.90px;font-family:'Liberation Sans';font-size:14px;line-height:14px;font-weight:400;color:#111;transform-origin:0 11.90px;transform:scaleX(1.0734);text-shadow:0 0 2px #6e6e6e,0 0 2px #6e6e6e;-webkit-text-stroke:0.45px #111">New York</span><span class="t" style="left:1150.30px;top:495.30px;font-family:'Liberation Sans';font-size:14px;line-height:14px;font-weight:400;color:#111;transform-origin:0 11.90px;transform:scaleX(1.0828);text-shadow:0 0 2px #6e6e6e,0 0 2px #6e6e6e;-webkit-text-stroke:0.45px #111">Washington</span><span class="t" style="left:1130.00px;top:541.65px;font-family:'Liberation Sans';font-size:11px;line-height:11px;font-weight:400;color:#2c2f30;letter-spacing:1.472px;text-shadow:0 0 2px #6e6e6e,0 0 2px #6e6e6e;-webkit-text-stroke:0.35px #2c2f30">VIRGINIA</span><span class="t" style="left:1140.00px;top:563.45px;font-family:'Liberation Sans';font-size:11px;line-height:11px;font-weight:400;color:#2c2f30;letter-spacing:1.370px;text-shadow:0 0 2px #6e6e6e,0 0 2px #6e6e6e;-webkit-text-stroke:0.35px #2c2f30">NORTH</span><span class="t" style="left:1130.00px;top:575.05px;font-family:'Liberation Sans';font-size:11px;line-height:11px;font-weight:400;color:#2c2f30;letter-spacing:1.107px;text-shadow:0 0 2px #6e6e6e,0 0 2px #6e6e6e;-webkit-text-stroke:0.35px #2c2f30">CAROLINA</span><span class="t" style="left:1130.00px;top:597.35px;font-family:'Liberation Sans';font-size:11px;line-height:11px;font-weight:400;color:#2c2f30;letter-spacing:-1.625px;text-shadow:0 0 2px #6e6e6e,0 0 2px #6e6e6e;-webkit-text-stroke:0.35px #2c2f30">SOUTH</span><span class="t" style="left:1110.00px;top:608.95px;font-family:'Liberation Sans';font-size:11px;line-height:11px;font-weight:400;color:#2c2f30;letter-spacing:0.964px;text-shadow:0 0 2px #6e6e6e,0 0 2px #6e6e6e;-webkit-text-stroke:0.35px #2c2f30">CAROLINA</span><span class="t" style="left:1100.00px;top:706.45px;font-family:'Liberation Sans';font-size:11px;line-height:11px;font-weight:400;color:#2c2f30;letter-spacing:1.719px;text-shadow:0 0 2px #6e6e6e,0 0 2px #6e6e6e;-webkit-text-stroke:0.35px #2c2f30">FLORIDA</span><span class="t" style="left:1130.00px;top:745.10px;font-family:'Liberation Sans';font-size:14px;line-height:14px;font-weight:400;color:#111;transform-origin:0 11.90px;transform:scaleX(1.0015);text-shadow:0 0 2px #6e6e6e,0 0 2px #6e6e6e;-webkit-text-stroke:0.45px #111">Miami</span>
<svg style="left:346px;top:165px" width="1157" height="768" viewBox="346 165 1157 768"><circle cx="414.4" cy="168.3" r="3.3" fill="#8c8a0a"/><circle cx="549.0" cy="337.8" r="3.3" fill="#8c8a0a"/><circle cx="546.4" cy="345.6" r="3.3" fill="#8c8a0a"/><circle cx="544.4" cy="353.3" r="3.3" fill="#8c8a0a"/><circle cx="547.8" cy="352.8" r="3.3" fill="#8c8a0a"/><circle cx="539.4" cy="359.4" r="3.3" fill="#8c8a0a"/><circle cx="608.9" cy="331.7" r="3.3" fill="#8c8a0a"/><circle cx="626.9" cy="339.2" r="3.3" fill="#8c8a0a"/><circle cx="659.7" cy="333.0" r="3.3" fill="#8c8a0a"/><circle cx="613.0" cy="345.6" r="3.3" fill="#8c8a0a"/><circle cx="616.7" cy="345.6" r="3.3" fill="#8c8a0a"/><circle cx="575.0" cy="350.6" r="3.3" fill="#8c8a0a"/><circle cx="572.8" cy="367.0" r="3.3" fill="#8c8a0a"/><circle cx="592.2" cy="373.9" r="3.3" fill="#8c8a0a"/><circle cx="622.0" cy="371.4" r="3.3" fill="#8c8a0a"/><circle cx="618.6" cy="378.3" r="3.3" fill="#8c8a0a"/><circle cx="596.4" cy="386.7" r="3.3" fill="#8c8a0a"/><circle cx="665.3" cy="361.7" r="3.3" fill="#8c8a0a"/><circle cx="692.2" cy="367.8" r="3.3" fill="#8c8a0a"/><circle cx="686.7" cy="378.9" r="3.3" fill="#8c8a0a"/><circle cx="697.2" cy="324.2" r="3.3" fill="#8c8a0a"/><circle cx="545.0" cy="380.3" r="3.3" fill="#8c8a0a"/><circle cx="533.9" cy="397.8" r="3.3" fill="#8c8a0a"/><circle cx="537.5" cy="401.7" r="3.3" fill="#8c8a0a"/><circle cx="570.0" cy="401.7" r="3.3" fill="#8c8a0a"/><circle cx="536.1" cy="417.8" r="3.3" fill="#8c8a0a"/><circle cx="561.7" cy="418.3" r="3.3" fill="#8c8a0a"/><circle cx="621.4" cy="426.7" r="3.3" fill="#8c8a0a"/><circle cx="632.5" cy="427.8" r="3.3" fill="#8c8a0a"/><circle cx="649.2" cy="423.9" r="3.3" fill="#8c8a0a"/><circle cx="694.2" cy="428.9" r="3.3" fill="#8c8a0a"/><circle cx="688.0" cy="441.4" r="3.3" fill="#8c8a0a"/><circle cx="658.9" cy="447.8" r="3.3" fill="#8c8a0a"/><circle cx="552.0" cy="453.0" r="3.3" fill="#8c8a0a"/><circle cx="593.0" cy="373.6" r="3.3" fill="#8c8a0a"/><circle cx="619.5" cy="377.8" r="3.3" fill="#8c8a0a"/><circle cx="622.4" cy="371.8" r="3.3" fill="#8c8a0a"/><circle cx="596.3" cy="386.0" r="3.3" fill="#8c8a0a"/><circle cx="570.3" cy="402.0" r="3.3" fill="#8c8a0a"/><circle cx="560.7" cy="418.0" r="3.3" fill="#8c8a0a"/><circle cx="621.3" cy="427.0" r="3.3" fill="#8c8a0a"/><circle cx="632.0" cy="428.0" r="3.3" fill="#8c8a0a"/><circle cx="648.7" cy="423.5" r="3.3" fill="#8c8a0a"/><circle cx="659.4" cy="448.4" r="3.3" fill="#8c8a0a"/><circle cx="687.2" cy="441.3" r="3.3" fill="#8c8a0a"/><circle cx="693.7" cy="429.5" r="3.3" fill="#8c8a0a"/><circle cx="711.5" cy="430.6" r="3.3" fill="#8c8a0a"/><circle cx="750.3" cy="419.2" r="3.3" fill="#8c8a0a"/><circle cx="765.7" cy="403.9" r="3.3" fill="#8c8a0a"/><circle cx="746.0" cy="369.0" r="3.3" fill="#8c8a0a"/><circle cx="744.3" cy="383.2" r="3.3" fill="#8c8a0a"/><circle cx="686.5" cy="378.9" r="3.3" fill="#8c8a0a"/><circle cx="692.6" cy="368.2" r="3.3" fill="#8c8a0a"/><circle cx="708.6" cy="402.0" r="3.3" fill="#8c8a0a"/><circle cx="698.0" cy="323.6" r="3.3" fill="#8c8a0a"/><circle cx="726.5" cy="325.4" r="3.3" fill="#8c8a0a"/><circle cx="658.7" cy="332.6" r="3.3" fill="#8c8a0a"/><circle cx="608.8" cy="331.8" r="3.3" fill="#8c8a0a"/><circle cx="627.7" cy="339.7" r="3.3" fill="#8c8a0a"/><circle cx="665.9" cy="361.0" r="3.3" fill="#8c8a0a"/><circle cx="716.8" cy="460.9" r="3.3" fill="#8c8a0a"/><circle cx="734.3" cy="466.2" r="3.3" fill="#8c8a0a"/><circle cx="760.3" cy="459.1" r="3.3" fill="#8c8a0a"/><circle cx="691.5" cy="465.5" r="3.3" fill="#8c8a0a"/><circle cx="694.4" cy="473.4" r="3.3" fill="#8c8a0a"/><circle cx="696.2" cy="482.3" r="3.3" fill="#8c8a0a"/><circle cx="697.2" cy="491.2" r="3.3" fill="#8c8a0a"/><circle cx="717.5" cy="488.7" r="3.3" fill="#8c8a0a"/><circle cx="709.3" cy="503.0" r="3.3" fill="#8c8a0a"/><circle cx="692.6" cy="519.0" r="3.3" fill="#8c8a0a"/><circle cx="651.6" cy="509.0" r="3.3" fill="#8c8a0a"/><circle cx="640.2" cy="478.7" r="3.3" fill="#8c8a0a"/><circle cx="571.4" cy="468.7" r="3.3" fill="#8c8a0a"/><circle cx="552.5" cy="452.3" r="3.3" fill="#8c8a0a"/><circle cx="545.4" cy="485.1" r="3.3" fill="#8c8a0a"/><circle cx="519.7" cy="481.6" r="3.3" fill="#8c8a0a"/><circle cx="582.1" cy="505.5" r="3.3" fill="#8c8a0a"/><circle cx="569.6" cy="510.8" r="3.3" fill="#8c8a0a"/><circle cx="558.9" cy="510.8" r="3.3" fill="#8c8a0a"/><circle cx="582.1" cy="510.8" r="3.3" fill="#8c8a0a"/><circle cx="760.3" cy="505.5" r="3.3" fill="#8c8a0a"/><circle cx="742.5" cy="512.6" r="3.3" fill="#8c8a0a"/><circle cx="753.2" cy="525.8" r="3.3" fill="#8c8a0a"/><circle cx="541.0" cy="535.8" r="3.3" fill="#8c8a0a"/><circle cx="548.2" cy="543.0" r="3.3" fill="#8c8a0a"/><circle cx="562.5" cy="539.3" r="3.3" fill="#8c8a0a"/><circle cx="644.5" cy="544.7" r="3.3" fill="#8c8a0a"/><circle cx="582.1" cy="544.7" r="3.3" fill="#8c8a0a"/><circle cx="571.4" cy="544.7" r="3.3" fill="#8c8a0a"/><circle cx="555.3" cy="548.3" r="3.3" fill="#8c8a0a"/><circle cx="753.2" cy="546.5" r="3.3" fill="#8c8a0a"/><circle cx="551.0" cy="551.0" r="3.3" fill="#8c8a0a"/><circle cx="557.1" cy="557.1" r="3.3" fill="#8c8a0a"/><circle cx="583.1" cy="555.3" r="3.3" fill="#8c8a0a"/><circle cx="587.4" cy="570.7" r="3.3" fill="#8c8a0a"/><circle cx="594.6" cy="579.2" r="3.3" fill="#8c8a0a"/><circle cx="570.3" cy="582.1" r="3.3" fill="#8c8a0a"/><circle cx="607.0" cy="585.6" r="3.3" fill="#8c8a0a"/><circle cx="583.1" cy="594.6" r="3.3" fill="#8c8a0a"/><circle cx="591.0" cy="598.1" r="3.3" fill="#8c8a0a"/><circle cx="598.1" cy="599.9" r="3.3" fill="#8c8a0a"/><circle cx="603.5" cy="603.5" r="3.3" fill="#8c8a0a"/><circle cx="608.8" cy="607.0" r="3.3" fill="#8c8a0a"/><circle cx="617.7" cy="603.5" r="3.3" fill="#8c8a0a"/><circle cx="614.2" cy="591.0" r="3.3" fill="#8c8a0a"/><circle cx="617.7" cy="616.0" r="3.3" fill="#8c8a0a"/><circle cx="619.5" cy="624.9" r="3.3" fill="#8c8a0a"/><circle cx="626.6" cy="623.1" r="3.3" fill="#8c8a0a"/><circle cx="634.5" cy="607.0" r="3.3" fill="#8c8a0a"/><circle cx="665.1" cy="581.4" r="3.3" fill="#8c8a0a"/><circle cx="697.2" cy="581.4" r="3.3" fill="#8c8a0a"/><circle cx="729.3" cy="581.4" r="3.3" fill="#8c8a0a"/><circle cx="738.9" cy="576.7" r="3.3" fill="#8c8a0a"/><circle cx="747.8" cy="557.8" r="3.3" fill="#8c8a0a"/><circle cx="687.2" cy="593.5" r="3.3" fill="#8c8a0a"/><circle cx="722.2" cy="598.1" r="3.3" fill="#8c8a0a"/><circle cx="689.0" cy="607.8" r="3.3" fill="#8c8a0a"/><circle cx="697.9" cy="612.4" r="3.3" fill="#8c8a0a"/><circle cx="711.5" cy="611.3" r="3.3" fill="#8c8a0a"/><circle cx="707.9" cy="633.1" r="3.3" fill="#8c8a0a"/><circle cx="702.6" cy="644.5" r="3.3" fill="#8c8a0a"/><circle cx="762.1" cy="617.7" r="3.3" fill="#8c8a0a"/><circle cx="767.5" cy="631.3" r="3.3" fill="#8c8a0a"/><circle cx="769.3" cy="637.3" r="3.3" fill="#8c8a0a"/><circle cx="1340.0" cy="852.0" r="3.3" fill="#8c8a0a"/><circle cx="1350.0" cy="853.0" r="3.3" fill="#8c8a0a"/><circle cx="1360.0" cy="856.0" r="3.3" fill="#8c8a0a"/><circle cx="1150.0" cy="722.0" r="3.3" fill="#8c8a0a"/><circle cx="1150.0" cy="735.0" r="3.3" fill="#8c8a0a"/><circle cx="1150.0" cy="700.0" r="3.3" fill="#8c8a0a"/><circle cx="1152.0" cy="690.0" r="3.3" fill="#8c8a0a"/><circle cx="1271.2" cy="398.1" r="3.3" fill="#8c8a0a"/><circle cx="1241.1" cy="405.3" r="3.3" fill="#8c8a0a"/><circle cx="1244.7" cy="410.1" r="3.3" fill="#8c8a0a"/><circle cx="1266.4" cy="406.5" r="3.3" fill="#8c8a0a"/><circle cx="1255.1" cy="415.6" r="3.3" fill="#8c8a0a"/><circle cx="1279.6" cy="415.6" r="3.3" fill="#8c8a0a"/><circle cx="1268.8" cy="420.4" r="3.3" fill="#8c8a0a"/><circle cx="1260.4" cy="420.9" r="3.3" fill="#8c8a0a"/><circle cx="1284.4" cy="418.5" r="3.3" fill="#8c8a0a"/><circle cx="1288.1" cy="425.7" r="3.3" fill="#8c8a0a"/><circle cx="1293.6" cy="422.1" r="3.3" fill="#8c8a0a"/><circle cx="1303.7" cy="415.6" r="3.3" fill="#8c8a0a"/><circle cx="1296.5" cy="408.9" r="3.3" fill="#8c8a0a"/><circle cx="1308.0" cy="402.9" r="3.3" fill="#8c8a0a"/><circle cx="1317.7" cy="411.3" r="3.3" fill="#8c8a0a"/><circle cx="1206.2" cy="420.4" r="3.3" fill="#8c8a0a"/><circle cx="1248.3" cy="425.7" r="3.3" fill="#8c8a0a"/><circle cx="1258.0" cy="426.2" r="3.3" fill="#8c8a0a"/><circle cx="1239.2" cy="432.5" r="3.3" fill="#8c8a0a"/><circle cx="1216.6" cy="431.0" r="3.3" fill="#8c8a0a"/><circle cx="1209.8" cy="434.2" r="3.3" fill="#8c8a0a"/><circle cx="1178.5" cy="434.2" r="3.3" fill="#8c8a0a"/><circle cx="1186.9" cy="437.8" r="3.3" fill="#8c8a0a"/><circle cx="1162.9" cy="437.3" r="3.3" fill="#8c8a0a"/><circle cx="1170.1" cy="439.0" r="3.3" fill="#8c8a0a"/><circle cx="1203.8" cy="439.0" r="3.3" fill="#8c8a0a"/><circle cx="1216.6" cy="438.3" r="3.3" fill="#8c8a0a"/><circle cx="1232.7" cy="442.1" r="3.3" fill="#8c8a0a"/><circle cx="1244.7" cy="441.4" r="3.3" fill="#8c8a0a"/><circle cx="1254.3" cy="436.6" r="3.3" fill="#8c8a0a"/><circle cx="1258.0" cy="431.8" r="3.3" fill="#8c8a0a"/><circle cx="1270.0" cy="436.6" r="3.3" fill="#8c8a0a"/><circle cx="1278.4" cy="433.0" r="3.3" fill="#8c8a0a"/><circle cx="1279.6" cy="439.0" r="3.3" fill="#8c8a0a"/><circle cx="1253.1" cy="441.4" r="3.3" fill="#8c8a0a"/><circle cx="1260.4" cy="440.2" r="3.3" fill="#8c8a0a"/><circle cx="1266.4" cy="447.4" r="3.3" fill="#8c8a0a"/><circle cx="1274.8" cy="448.6" r="3.3" fill="#8c8a0a"/><circle cx="1277.2" cy="452.2" r="3.3" fill="#8c8a0a"/><circle cx="1264.0" cy="453.4" r="3.3" fill="#8c8a0a"/><circle cx="1253.1" cy="455.8" r="3.3" fill="#8c8a0a"/><circle cx="1245.9" cy="449.8" r="3.3" fill="#8c8a0a"/><circle cx="1233.9" cy="447.9" r="3.3" fill="#8c8a0a"/><circle cx="1205.0" cy="445.0" r="3.3" fill="#8c8a0a"/><circle cx="1209.8" cy="452.2" r="3.3" fill="#8c8a0a"/><circle cx="1170.1" cy="450.3" r="3.3" fill="#8c8a0a"/><circle cx="1159.3" cy="456.6" r="3.3" fill="#8c8a0a"/><circle cx="1167.7" cy="458.2" r="3.3" fill="#8c8a0a"/><circle cx="1186.9" cy="456.6" r="3.3" fill="#8c8a0a"/><circle cx="1194.2" cy="456.6" r="3.3" fill="#8c8a0a"/><circle cx="1207.4" cy="454.6" r="3.3" fill="#8c8a0a"/><circle cx="1206.2" cy="461.8" r="3.3" fill="#8c8a0a"/><circle cx="1186.9" cy="464.3" r="3.3" fill="#8c8a0a"/><circle cx="1217.0" cy="465.5" r="3.3" fill="#8c8a0a"/><circle cx="1224.3" cy="465.5" r="3.3" fill="#8c8a0a"/><circle cx="1233.9" cy="460.6" r="3.3" fill="#8c8a0a"/><circle cx="1241.1" cy="461.8" r="3.3" fill="#8c8a0a"/><circle cx="1251.9" cy="463.1" r="3.3" fill="#8c8a0a"/><circle cx="1259.2" cy="464.3" r="3.3" fill="#8c8a0a"/><circle cx="1272.4" cy="463.1" r="3.3" fill="#8c8a0a"/><circle cx="1284.4" cy="464.3" r="3.3" fill="#8c8a0a"/><circle cx="1282.0" cy="459.4" r="3.3" fill="#8c8a0a"/><circle cx="1261.6" cy="471.0" r="3.3" fill="#8c8a0a"/><circle cx="1251.9" cy="478.2" r="3.3" fill="#8c8a0a"/><circle cx="1245.9" cy="470.3" r="3.3" fill="#8c8a0a"/><circle cx="1237.5" cy="471.5" r="3.3" fill="#8c8a0a"/><circle cx="1231.5" cy="476.3" r="3.3" fill="#8c8a0a"/><circle cx="1224.3" cy="481.1" r="3.3" fill="#8c8a0a"/><circle cx="1217.0" cy="476.3" r="3.3" fill="#8c8a0a"/><circle cx="1207.4" cy="472.7" r="3.3" fill="#8c8a0a"/><circle cx="1202.6" cy="476.3" r="3.3" fill="#8c8a0a"/><circle cx="1195.4" cy="481.1" r="3.3" fill="#8c8a0a"/><circle cx="1190.6" cy="472.7" r="3.3" fill="#8c8a0a"/><circle cx="1179.7" cy="481.1" r="3.3" fill="#8c8a0a"/><circle cx="1171.3" cy="485.9" r="3.3" fill="#8c8a0a"/><circle cx="1159.3" cy="484.0" r="3.3" fill="#8c8a0a"/><circle cx="1153.2" cy="478.7" r="3.3" fill="#8c8a0a"/><circle cx="1149.6" cy="469.1" r="3.3" fill="#8c8a0a"/><circle cx="1154.4" cy="490.7" r="3.3" fill="#8c8a0a"/><circle cx="1164.1" cy="490.7" r="3.3" fill="#8c8a0a"/><circle cx="1176.1" cy="489.5" r="3.3" fill="#8c8a0a"/><circle cx="1186.9" cy="491.9" r="3.3" fill="#8c8a0a"/><circle cx="1197.8" cy="489.5" r="3.3" fill="#8c8a0a"/><circle cx="1205.0" cy="488.3" r="3.3" fill="#8c8a0a"/><circle cx="1212.2" cy="483.5" r="3.3" fill="#8c8a0a"/><circle cx="1219.4" cy="485.9" r="3.3" fill="#8c8a0a"/><circle cx="1226.7" cy="490.7" r="3.3" fill="#8c8a0a"/><circle cx="1233.9" cy="485.9" r="3.3" fill="#8c8a0a"/><circle cx="1241.1" cy="482.3" r="3.3" fill="#8c8a0a"/><circle cx="1236.3" cy="483.5" r="3.3" fill="#8c8a0a"/><circle cx="1231.5" cy="493.1" r="3.3" fill="#8c8a0a"/><circle cx="1224.3" cy="495.6" r="3.3" fill="#8c8a0a"/><circle cx="1218.2" cy="498.0" r="3.3" fill="#8c8a0a"/><circle cx="1212.2" cy="495.6" r="3.3" fill="#8c8a0a"/><circle cx="1205.0" cy="493.1" r="3.3" fill="#8c8a0a"/><circle cx="1191.8" cy="498.4" r="3.3" fill="#8c8a0a"/><circle cx="1182.1" cy="498.0" r="3.3" fill="#8c8a0a"/><circle cx="1171.3" cy="499.2" r="3.3" fill="#8c8a0a"/><circle cx="1161.7" cy="495.6" r="3.3" fill="#8c8a0a"/><circle cx="1152.0" cy="498.0" r="3.3" fill="#8c8a0a"/><circle cx="1156.9" cy="502.8" r="3.3" fill="#8c8a0a"/><circle cx="1166.5" cy="505.2" r="3.3" fill="#8c8a0a"/><circle cx="1176.1" cy="506.4" r="3.3" fill="#8c8a0a"/><circle cx="1185.7" cy="505.2" r="3.3" fill="#8c8a0a"/><circle cx="1195.4" cy="503.3" r="3.3" fill="#8c8a0a"/><circle cx="1202.6" cy="506.4" r="3.3" fill="#8c8a0a"/><circle cx="1209.8" cy="504.0" r="3.3" fill="#8c8a0a"/><circle cx="1218.2" cy="505.2" r="3.3" fill="#8c8a0a"/><circle cx="1227.9" cy="507.6" r="3.3" fill="#8c8a0a"/><circle cx="1212.2" cy="511.2" r="3.3" fill="#8c8a0a"/><circle cx="1203.8" cy="513.6" r="3.3" fill="#8c8a0a"/><circle cx="1195.4" cy="511.9" r="3.3" fill="#8c8a0a"/><circle cx="1188.1" cy="514.8" r="3.3" fill="#8c8a0a"/><circle cx="1180.9" cy="510.0" r="3.3" fill="#8c8a0a"/><circle cx="1173.7" cy="511.2" r="3.3" fill="#8c8a0a"/><circle cx="1166.5" cy="513.6" r="3.3" fill="#8c8a0a"/><circle cx="1161.7" cy="519.6" r="3.3" fill="#8c8a0a"/><circle cx="1174.9" cy="519.6" r="3.3" fill="#8c8a0a"/><circle cx="1185.7" cy="518.4" r="3.3" fill="#8c8a0a"/><circle cx="1191.8" cy="523.2" r="3.3" fill="#8c8a0a"/><circle cx="1196.6" cy="517.2" r="3.3" fill="#8c8a0a"/><circle cx="1203.8" cy="519.6" r="3.3" fill="#8c8a0a"/><circle cx="1176.1" cy="525.6" r="3.3" fill="#8c8a0a"/><circle cx="1165.3" cy="525.6" r="3.3" fill="#8c8a0a"/><circle cx="1161.7" cy="531.2" r="3.3" fill="#8c8a0a"/><circle cx="1170.1" cy="531.2" r="3.3" fill="#8c8a0a"/><circle cx="1184.5" cy="527.3" r="3.3" fill="#8c8a0a"/><circle cx="1184.5" cy="534.1" r="3.3" fill="#8c8a0a"/><circle cx="1211.7" cy="526.4" r="3.3" fill="#8c8a0a"/><circle cx="1209.8" cy="537.7" r="3.3" fill="#8c8a0a"/><circle cx="1200.2" cy="546.1" r="3.3" fill="#8c8a0a"/><circle cx="1199.0" cy="550.9" r="3.3" fill="#8c8a0a"/><circle cx="1202.6" cy="553.3" r="3.3" fill="#8c8a0a"/><circle cx="1186.9" cy="546.1" r="3.3" fill="#8c8a0a"/><circle cx="1178.5" cy="541.3" r="3.3" fill="#8c8a0a"/><circle cx="1171.3" cy="546.1" r="3.3" fill="#8c8a0a"/><circle cx="1159.3" cy="544.9" r="3.3" fill="#8c8a0a"/><circle cx="1150.8" cy="547.3" r="3.3" fill="#8c8a0a"/><circle cx="1148.4" cy="514.8" r="3.3" fill="#8c8a0a"/><circle cx="1150.8" cy="566.6" r="3.3" fill="#8c8a0a"/><circle cx="1162.9" cy="567.8" r="3.3" fill="#8c8a0a"/><circle cx="1178.5" cy="569.0" r="3.3" fill="#8c8a0a"/><circle cx="1166.5" cy="573.8" r="3.3" fill="#8c8a0a"/><circle cx="1165.3" cy="585.8" r="3.3" fill="#8c8a0a"/><circle cx="1182.1" cy="582.2" r="3.3" fill="#8c8a0a"/><circle cx="1177.3" cy="599.1" r="3.3" fill="#8c8a0a"/><circle cx="1150.8" cy="600.3" r="3.3" fill="#8c8a0a"/><circle cx="1150.8" cy="624.3" r="3.3" fill="#8c8a0a"/><circle cx="1148.4" cy="457.0" r="3.3" fill="#8c8a0a"/><circle cx="1149.6" cy="481.1" r="3.3" fill="#8c8a0a"/><circle cx="1152.0" cy="534.1" r="3.3" fill="#8c8a0a"/><circle cx="1168.9" cy="524.4" r="3.3" fill="#8c8a0a"/><rect x="536.7" y="314" width="11" height="7" fill="#000"/><rect x="532.5" y="447" width="11" height="7" fill="#000"/><path d="M542.8 311.4 L552 327.5 L533.9 327.5Z" fill="#8b0000"/><path d="M538.9 445.6 L547.8 461.7 L529.7 461.7Z" fill="#8b0000"/><rect x="539.5" y="383.6" width="11.6" height="11.4" fill="#000"/><rect x="552.6" y="516.2" width="11.6" height="11.8" fill="#000"/><circle cx="672" cy="212.4" r="3.6" fill="#6a6a6a" stroke="#111" stroke-width="1.2"/><circle cx="663.4" cy="270.9" r="3.6" fill="#6a6a6a" stroke="#111" stroke-width="1.2"/><circle cx="905" cy="296" r="3.6" fill="#6a6a6a" stroke="#111" stroke-width="1.2"/><circle cx="534.7" cy="309.4" r="3.6" fill="#6a6a6a" stroke="#111" stroke-width="1.2"/><circle cx="648.4" cy="565.3" r="3.6" fill="#6a6a6a" stroke="#111" stroke-width="1.2"/><circle cx="816.3" cy="816.7" r="3.6" fill="#6a6a6a" stroke="#111" stroke-width="1.2"/><circle cx="876.2" cy="836" r="3.6" fill="#6a6a6a" stroke="#111" stroke-width="1.2"/><circle cx="876.2" cy="836" r="1.6" fill="#111"/><circle cx="1114.7" cy="779.2" r="3.6" fill="#6a6a6a" stroke="#111" stroke-width="1.2"/><circle cx="1114.7" cy="779.2" r="1.6" fill="#111"/><circle cx="1291.5" cy="850.2" r="3.6" fill="#6a6a6a" stroke="#111" stroke-width="1.2"/><circle cx="1291.5" cy="850.2" r="1.6" fill="#111"/><circle cx="1209" cy="390.7" r="3.6" fill="#6a6a6a" stroke="#111" stroke-width="1.2"/><circle cx="1209" cy="390.7" r="1.6" fill="#111"/><circle cx="1239.8" cy="389.6" r="3.6" fill="#6a6a6a" stroke="#111" stroke-width="1.2"/><circle cx="1157.4" cy="426.3" r="3.6" fill="#6a6a6a" stroke="#111" stroke-width="1.2"/></svg>
<div style="position:absolute;left:359px;top:177px;width:210px;height:50px;background:#808080;border-radius:2px;box-shadow:0 1px 3px rgba(0,0,0,0.25)"></div><div style="position:absolute;left:445px;top:177px;width:1px;height:50px;background:#747474"></div><span class="t" style="left:381.00px;top:190.68px;font-family:'Liberation Sans';font-size:22.5px;line-height:22.5px;font-weight:400;color:#000;transform-origin:0 19.12px;transform:scaleX(0.9753);-webkit-text-stroke:0.5px #000">Map</span><span class="t" style="left:468.00px;top:190.68px;font-family:'Liberation Sans';font-size:22.5px;line-height:22.5px;font-weight:400;color:#2b2b2b;transform-origin:0 19.12px;transform:scaleX(0.9869);">Satellite</span><div style="position:absolute;left:1441px;top:177.5px;width:50px;height:49px;background:#808080;border-radius:2px;box-shadow:0 1px 3px rgba(0,0,0,0.25)"></div><svg style="left:1453px;top:189px" width="26" height="26" viewBox="0 0 26 26"><path d="M2 9 V2 H9 M17 2 H24 V9 M24 17 V24 H17 M9 24 H2 V17" fill="none" stroke="#333" stroke-width="3"/></svg><div style="position:absolute;left:1441px;top:712px;width:50px;height:49px;background:#808080;border-radius:2px;box-shadow:0 1px 3px rgba(0,0,0,0.25)"></div><svg style="left:1453px;top:718px" width="26" height="40" viewBox="0 0 26 40"><circle cx="13" cy="8" r="5.5" fill="#8a6a10"/><path d="M6 15 H20 L22 27 H19 L18 38 H14.5 L13 30 L11.5 38 H8 L7 27 H4Z" fill="#8a6a10"/><path d="M10 15 L13 21 L16 15" fill="#7a4010"/></svg><div style="position:absolute;left:1441px;top:802.4px;width:50px;height:100px;background:#808080;border-radius:2px;box-shadow:0 1px 3px rgba(0,0,0,0.25)"></div><div style="position:absolute;left:1450px;top:852px;width:32px;height:1px;background:#747474"></div><svg style="left:1453px;top:815px" width="26" height="76" viewBox="0 0 26 76"><path d="M3 12 H23 M13 2 V22" stroke="#333" stroke-width="3.6"/><path d="M3 63 H23" stroke="#333" stroke-width="3.6"/></svg><div style="position:absolute;left:1143px;top:916.5px;width:360px;height:16.5px;background:#7e8391"></div><div style="position:absolute;left:1265px;top:917px;width:1px;height:16px;background:#909090"></div><div style="position:absolute;left:1453px;top:917px;width:1px;height:16px;background:#909090"></div><span class="t" style="left:1149.60px;top:918.80px;font-family:'Liberation Sans';font-size:12px;line-height:12px;font-weight:400;color:#1f1f1f;transform-origin:0 10.20px;transform:scaleX(1.0417);">Keyboard shortcuts</span><span class="t" style="left:1272.60px;top:918.80px;font-family:'Liberation Sans';font-size:12px;line-height:12px;font-weight:400;color:#1f1f1f;transform-origin:0 10.20px;transform:scaleX(1.0113);">Map data ©2023 Google, INEGI</span><span class="t" style="left:1460.80px;top:918.80px;font-family:'Liberation Sans';font-size:12px;line-height:12px;font-weight:400;color:#1f1f1f;transform-origin:0 10.20px;transform:scaleX(1.0590);">Terms</span><svg style="left:346px;top:895px" width="100" height="40" viewBox="346 895 100 40"><g fill="none" stroke="#7a879c" stroke-width="4.2" stroke-linecap="butt"><path d="M375.3 910.6 A7.1 7.1 0 1 0 375.6 915 H369" /></g><g fill="none" stroke="#7a879c" stroke-width="4.2" stroke-linecap="butt"><circle cx="383.4" cy="917.4" r="4.3"/></g><g fill="none" stroke="#7a879c" stroke-width="4.2" stroke-linecap="butt"><circle cx="395.3" cy="917.4" r="4.3"/></g><g fill="none" stroke="#7a879c" stroke-width="4.2" stroke-linecap="butt"><circle cx="407.4" cy="917.2" r="4.1"/><path d="M411.6 912.5 V923.5 A4.3 4.3 0 0 1 403 925"/></g><g fill="none" stroke="#7a879c" stroke-width="4.2" stroke-linecap="butt"><path d="M415.7 906.8 V922.9"/></g><g fill="none" stroke="#7a879c" stroke-width="4.2" stroke-linecap="butt"><path d="M419.6 917.4 H427.4 A4.1 4.1 0 1 0 426.5 920.6"/></g><g fill="none" stroke="#2a55a8" stroke-width="2.1"><path d="M375.3 910.6 A7.1 7.1 0 1 0 375.6 915 H369" /></g><g fill="none" stroke="#a3281d" stroke-width="2.1"><circle cx="383.4" cy="917.4" r="4.3"/></g><g fill="none" stroke="#a27905" stroke-width="2.1"><circle cx="395.3" cy="917.4" r="4.3"/></g><g fill="none" stroke="#2a55a8" stroke-width="2.1"><circle cx="407.4" cy="917.2" r="4.1"/><path d="M411.6 912.5 V923.5 A4.3 4.3 0 0 1 403 925"/></g><g fill="none" stroke="#1b6a30" stroke-width="2.1"><path d="M415.7 906.8 V922.9"/></g><g fill="none" stroke="#a3281d" stroke-width="2.1"><path d="M419.6 917.4 H427.4 A4.1 4.1 0 1 0 426.5 920.6"/></g></svg>
<div style="position:absolute;left:346px;top:933px;width:1157px;height:42px;background:#808080;border-radius:0 0 0 6px"></div>
<div style="position:absolute;left:351px;top:943px;width:22px;height:22px;background:#850a4a"></div>
<span class="t" style="left:382.80px;top:946.75px;font-family:'Liberation Sans';font-size:13px;line-height:13px;font-weight:400;color:#2a2d35;transform-origin:0 11.05px;transform:scaleX(1.0436);">1-Day</span>
<div style="position:absolute;left:439px;top:943px;width:22px;height:22px;background:#2b0080"></div>
<span class="t" style="left:470.60px;top:946.75px;font-family:'Liberation Sans';font-size:13px;line-height:13px;font-weight:400;color:#2a2d35;transform-origin:0 11.05px;transform:scaleX(1.1359);">2-Day</span>
<div style="position:absolute;left:530px;top:943px;width:22px;height:22px;background:#882200"></div>
<span class="t" style="left:561.60px;top:946.75px;font-family:'Liberation Sans';font-size:13px;line-height:13px;font-weight:400;color:#2a2d35;transform-origin:0 11.05px;transform:scaleX(1.1647);">3-Day</span>
<div style="position:absolute;left:622px;top:943px;width:22px;height:22px;background:#787600"></div>
<span class="t" style="left:653.00px;top:946.75px;font-family:'Liberation Sans';font-size:13px;line-height:13px;font-weight:400;color:#2a2d35;transform-origin:0 11.05px;transform:scaleX(1.1532);">4-Day</span>
<div style="position:absolute;left:714px;top:943px;width:22px;height:22px;background:#400040"></div>
<span class="t" style="left:745.00px;top:946.75px;font-family:'Liberation Sans';font-size:13px;line-height:13px;font-weight:400;color:#2a2d35;transform-origin:0 11.05px;transform:scaleX(1.1532);">5-Day</span>
<div style="position:absolute;left:806px;top:943px;width:22px;height:22px;background:#80055a"></div>
<span class="t" style="left:837.00px;top:946.75px;font-family:'Liberation Sans';font-size:13px;line-height:13px;font-weight:400;color:#2a2d35;transform-origin:0 11.05px;transform:scaleX(1.1532);">6-Day</span>
<div style="position:absolute;left:1503px;top:165px;width:386px;height:810px;background:#808080;border-radius:0 4px 4px 0"></div>
<span class="t" style="left:1514.00px;top:178.80px;font-family:'Liberation Sans';font-size:16px;line-height:16px;font-weight:400;color:#2b2e36;transform-origin:0 13.60px;transform:scaleX(0.9051);">PLOT SETTINGS</span>
<svg style="left:1858.00px;top:177.20px" width="17.6" height="17.6" viewBox="0 0 17.6 17.6"><path d="M1 1 L16.60 16.60 M16.60 1 L1 16.60" stroke="#2b2e36" stroke-width="1.8" fill="none"/></svg>
<div style="position:absolute;left:1503px;top:209px;width:386px;height:1px;background:#747474"></div>
<span class="t" style="left:1514.00px;top:223.90px;font-family:'Liberation Sans';font-size:16px;line-height:16px;font-weight:400;color:#2b2e36;transform-origin:0 13.60px;transform:scaleX(0.9041);">SELECT PERIOD</span>
<div style="position:absolute;left:1513px;top:254px;width:359px;height:43px;border:1px solid #6c6c6c;border-radius:4px;box-sizing:content-box"></div>
<span class="t" style="left:1530.00px;top:267.55px;font-family:'Liberation Sans';font-size:17px;line-height:17px;font-weight:400;color:#2b2e36;transform-origin:0 14.45px;transform:scaleX(1.0586);">sm</span>
<svg style="left:1840.50px;top:272.35px" width="15" height="8.5" viewBox="0 0 15 8.5"><path d="M1 1 L7.50 7.00 L14.00 1" fill="none" stroke="#2b2e36" stroke-width="1.8" stroke-linecap="round" stroke-linejoin="round"/></svg>
<div style="position:absolute;left:1503px;top:309px;width:381px;height:1px;background:#747474"></div>
<span class="t" style="left:1514.00px;top:327.10px;font-family:'Liberation Sans';font-size:16px;line-height:16px;font-weight:400;color:#2b2e36;transform-origin:0 13.60px;transform:scaleX(0.9809);">HEATMAP</span>
<span class="t" style="left:1514.00px;top:376.90px;font-family:'Liberation Sans';font-size:16px;line-height:16px;font-weight:400;color:#2b2e36;transform-origin:0 13.60px;transform:scaleX(0.9817);">DEMAND SCALING</span>
<span class="t" style="left:1514.00px;top:426.90px;font-family:'Liberation Sans';font-size:16px;line-height:16px;font-weight:400;color:#2b2e36;transform-origin:0 13.60px;transform:scaleX(0.9509);">REMOVE 0&#x27;S FLOWS</span>
<div style="position:absolute;left:1814.5px;top:323.5px;width:47px;height:23px;border-radius:13px;border:1px solid #747474;background:#808080"></div><div style="position:absolute;left:1817.5px;top:326.5px;width:18px;height:18px;border-radius:50%;background:#000"></div>
<div style="position:absolute;left:1814.5px;top:373.2px;width:47px;height:23px;border-radius:13px;border:1px solid #747474;background:#808080"></div><div style="position:absolute;left:1817.5px;top:376.2px;width:18px;height:18px;border-radius:50%;background:#000"></div>
<div style="position:absolute;left:1814.5px;top:423.0px;width:49px;height:25px;border-radius:13px;background:#8a2c12"></div><div style="position:absolute;left:1842.0px;top:426.5px;width:18px;height:18px;border-radius:50%;background:#808080"></div>
<div style="position:absolute;left:1503px;top:460px;width:381px;height:156px;background:#78797b"></div>
<div style="position:absolute;left:1503px;top:511px;width:381px;height:1px;background:#707174"></div>
<div style="position:absolute;left:1503px;top:563px;width:381px;height:1px;background:#707174"></div>
<div style="position:absolute;left:1503px;top:615px;width:381px;height:1px;background:#707174"></div>
<span class="t" style="left:1514.00px;top:477.80px;font-family:'Liberation Sans';font-size:16px;line-height:16px;font-weight:400;color:#2b2e36;transform-origin:0 13.60px;transform:scaleX(0.9208);">SELECT GROUPS</span>
<span class="t" style="left:1514.00px;top:529.90px;font-family:'Liberation Sans';font-size:16px;line-height:16px;font-weight:400;color:#2b2e36;transform-origin:0 13.60px;transform:scaleX(0.9165);">SELECT FLOWS</span>
<span class="t" style="left:1514.00px;top:581.60px;font-family:'Liberation Sans';font-size:16px;line-height:16px;font-weight:400;color:#2b2e36;transform-origin:0 13.60px;transform:scaleX(0.9413);">SET SHAPE, SIZE AND COLOR</span>
<svg style="left:1850.50px;top:481.50px" width="16" height="9.0" viewBox="0 0 16 9.0"><path d="M1 1 L8.00 7.50 L15.00 1" fill="none" stroke="#2b2e36" stroke-width="2" stroke-linecap="round" stroke-linejoin="round"/></svg>
<svg style="left:1850.50px;top:533.50px" width="16" height="9.0" viewBox="0 0 16 9.0"><path d="M1 1 L8.00 7.50 L15.00 1" fill="none" stroke="#2b2e36" stroke-width="2" stroke-linecap="round" stroke-linejoin="round"/></svg>
<svg style="left:1850.50px;top:584.50px" width="16" height="9.0" viewBox="0 0 16 9.0"><path d="M1 7.50 L8.00 1 L15.00 7.50" fill="none" stroke="#2b2e36" stroke-width="2" stroke-linecap="round" stroke-linejoin="round"/></svg>
<span class="t" style="left:1513.40px;top:629.55px;font-family:'Liberation Sans';font-size:17px;line-height:17px;font-weight:400;color:#2b2e36;transform-origin:0 14.45px;transform:scaleX(1.0725);">Supplier</span>
<svg style="left:1831.30px;top:628.00px" width="20" height="20" viewBox="0 0 20 20"><path d="M16.99 8.29 L19.46 8.38 L19.46 11.62 L16.99 11.71 L16.16 13.74 L17.84 15.54 L15.54 17.84 L13.74 16.16 L11.71 16.99 L11.62 19.46 L8.38 19.46 L8.29 16.99 L6.26 16.16 L4.46 17.84 L2.16 15.54 L3.84 13.74 L3.01 11.71 L0.54 11.62 L0.54 8.38 L3.01 8.29 L3.84 6.26 L2.16 4.46 L4.46 2.16 L6.26 3.84 L8.29 3.01 L8.38 0.54 L11.62 0.54 L11.71 3.01 L13.74 3.84 L15.54 2.16 L17.84 4.46 L16.16 6.26Z" fill="none" stroke="#2b2e36" stroke-width="1.6" stroke-linejoin="round"/><circle cx="10" cy="10" r="3" fill="none" stroke="#2b2e36" stroke-width="1.6"/></svg>
<span class="t" style="left:1513.40px;top:674.65px;font-family:'Liberation Sans';font-size:17px;line-height:17px;font-weight:400;color:#2b2e36;transform-origin:0 14.45px;transform:scaleX(1.0632);">Plant</span>
<svg style="left:1831.30px;top:673.10px" width="20" height="20" viewBox="0 0 20 20"><path d="M16.99 8.29 L19.46 8.38 L19.46 11.62 L16.99 11.71 L16.16 13.74 L17.84 15.54 L15.54 17.84 L13.74 16.16 L11.71 16.99 L11.62 19.46 L8.38 19.46 L8.29 16.99 L6.26 16.16 L4.46 17.84 L2.16 15.54 L3.84 13.74 L3.01 11.71 L0.54 11.62 L0.54 8.38 L3.01 8.29 L3.84 6.26 L2.16 4.46 L4.46 2.16 L6.26 3.84 L8.29 3.01 L8.38 0.54 L11.62 0.54 L11.71 3.01 L13.74 3.84 L15.54 2.16 L17.84 4.46 L16.16 6.26Z" fill="none" stroke="#2b2e36" stroke-width="1.6" stroke-linejoin="round"/><circle cx="10" cy="10" r="3" fill="none" stroke="#2b2e36" stroke-width="1.6"/></svg>
<span class="t" style="left:1513.40px;top:719.75px;font-family:'Liberation Sans';font-size:17px;line-height:17px;font-weight:400;color:#2b2e36;transform-origin:0 14.45px;transform:scaleX(1.0763);">Warehouse</span>
<svg style="left:1831.30px;top:718.20px" width="20" height="20" viewBox="0 0 20 20"><path d="M16.99 8.29 L19.46 8.38 L19.46 11.62 L16.99 11.71 L16.16 13.74 L17.84 15.54 L15.54 17.84 L13.74 16.16 L11.71 16.99 L11.62 19.46 L8.38 19.46 L8.29 16.99 L6.26 16.16 L4.46 17.84 L2.16 15.54 L3.84 13.74 L3.01 11.71 L0.54 11.62 L0.54 8.38 L3.01 8.29 L3.84 6.26 L2.16 4.46 L4.46 2.16 L6.26 3.84 L8.29 3.01 L8.38 0.54 L11.62 0.54 L11.71 3.01 L13.74 3.84 L15.54 2.16 L17.84 4.46 L16.16 6.26Z" fill="none" stroke="#2b2e36" stroke-width="1.6" stroke-linejoin="round"/><circle cx="10" cy="10" r="3" fill="none" stroke="#2b2e36" stroke-width="1.6"/></svg>
<span class="t" style="left:1513.40px;top:764.85px;font-family:'Liberation Sans';font-size:17px;line-height:17px;font-weight:400;color:#2b2e36;transform-origin:0 14.45px;transform:scaleX(1.0979);">Customer</span>
<svg style="left:1831.30px;top:763.30px" width="20" height="20" viewBox="0 0 20 20"><path d="M16.99 8.29 L19.46 8.38 L19.46 11.62 L16.99 11.71 L16.16 13.74 L17.84 15.54 L15.54 17.84 L13.74 16.16 L11.71 16.99 L11.62 19.46 L8.38 19.46 L8.29 16.99 L6.26 16.16 L4.46 17.84 L2.16 15.54 L3.84 13.74 L3.01 11.71 L0.54 11.62 L0.54 8.38 L3.01 8.29 L3.84 6.26 L2.16 4.46 L4.46 2.16 L6.26 3.84 L8.29 3.01 L8.38 0.54 L11.62 0.54 L11.71 3.01 L13.74 3.84 L15.54 2.16 L17.84 4.46 L16.16 6.26Z" fill="none" stroke="#2b2e36" stroke-width="1.6" stroke-linejoin="round"/><circle cx="10" cy="10" r="3" fill="none" stroke="#2b2e36" stroke-width="1.6"/></svg>
<span class="t" style="left:1513.40px;top:809.95px;font-family:'Liberation Sans';font-size:17px;line-height:17px;font-weight:400;color:#2b2e36;transform-origin:0 14.45px;transform:scaleX(0.9909);">Flows</span>
<svg style="left:1831.30px;top:808.40px" width="20" height="20" viewBox="0 0 20 20"><path d="M16.99 8.29 L19.46 8.38 L19.46 11.62 L16.99 11.71 L16.16 13.74 L17.84 15.54 L15.54 17.84 L13.74 16.16 L11.71 16.99 L11.62 19.46 L8.38 19.46 L8.29 16.99 L6.26 16.16 L4.46 17.84 L2.16 15.54 L3.84 13.74 L3.01 11.71 L0.54 11.62 L0.54 8.38 L3.01 8.29 L3.84 6.26 L2.16 4.46 L4.46 2.16 L6.26 3.84 L8.29 3.01 L8.38 0.54 L11.62 0.54 L11.71 3.01 L13.74 3.84 L15.54 2.16 L17.84 4.46 L16.16 6.26Z" fill="none" stroke="#2b2e36" stroke-width="1.6" stroke-linejoin="round"/><circle cx="10" cy="10" r="3" fill="none" stroke="#2b2e36" stroke-width="1.6"/></svg>
<div style="position:absolute;left:1503px;top:841px;width:381px;height:1px;background:#747474"></div>
<span class="t" style="left:1513.40px;top:860.90px;font-family:'Liberation Sans';font-size:16px;line-height:16px;font-weight:400;color:#2b2e36;transform-origin:0 13.60px;transform:scaleX(0.9509);">SET TRANSIT TIME COLOR</span>
<svg style="left:1831.30px;top:858.50px" width="20" height="20" viewBox="0 0 20 20"><path d="M16.99 8.29 L19.46 8.38 L19.46 11.62 L16.99 11.71 L16.16 13.74 L17.84 15.54 L15.54 17.84 L13.74 16.16 L11.71 16.99 L11.62 19.46 L8.38 19.46 L8.29 16.99 L6.26 16.16 L4.46 17.84 L2.16 15.54 L3.84 13.74 L3.01 11.71 L0.54 11.62 L0.54 8.38 L3.01 8.29 L3.84 6.26 L2.16 4.46 L4.46 2.16 L6.26 3.84 L8.29 3.01 L8.38 0.54 L11.62 0.54 L11.71 3.01 L13.74 3.84 L15.54 2.16 L17.84 4.46 L16.16 6.26Z" fill="none" stroke="#2b2e36" stroke-width="1.6" stroke-linejoin="round"/><circle cx="10" cy="10" r="3" fill="none" stroke="#2b2e36" stroke-width="1.6"/></svg>
<div style="position:absolute;left:1503px;top:897px;width:381px;height:1px;background:#747474"></div>
<span class="t" style="left:343.00px;top:1033.40px;font-family:'Liberation Sans';font-size:16px;line-height:16px;font-weight:400;color:#30343e;transform-origin:0 13.60px;transform:scaleX(1.1111);">2023 © Lambda Supply Chain Solutions Private Limited.</span>
<span class="t" style="left:1602.50px;top:1033.10px;font-family:'Liberation Sans';font-size:16px;line-height:16px;font-weight:400;color:#30343e;transform-origin:0 13.60px;transform:scaleX(1.1224);">Support : support@l</span>
<div style="position:absolute;left:773px;top:313px;width:375px;height:454px;background:#fff;border-radius:8px"></div><div style="position:absolute;left:773px;top:378px;width:375px;height:1px;background:#eef0f3"></div><span class="t" style="left:794.50px;top:337.55px;font-family:'Liberation Sans';font-size:17px;line-height:17px;font-weight:700;color:#6b7087;transform-origin:0 14.45px;transform:scaleX(0.9970);">Transit Time Color</span><svg style="left:1113.55px;top:334.45px" width="15.5" height="15.5" viewBox="0 0 15.5 15.5"><path d="M1 1 L14.50 14.50 M14.50 1 L1 14.50" stroke="#7a7a7a" stroke-width="1.6" fill="none"/></svg><div style="position:absolute;left:782px;top:377px;width:363px;height:293px;box-sizing:border-box;border:5px solid #fff100"></div><span class="t" style="left:794.70px;top:401.95px;font-family:'Liberation Sans';font-size:17px;line-height:17px;font-weight:400;color:#4b5061;transform-origin:0 14.45px;transform:scaleX(0.9921);">1-Day</span><div style="position:absolute;left:1043px;top:402.2px;width:84px;height:33px;box-sizing:border-box;border:2px solid #767676;border-radius:2px;background:#ff1493"></div><span class="t" style="left:794.70px;top:446.40px;font-family:'Liberation Sans';font-size:17px;line-height:17px;font-weight:400;color:#4b5061;transform-origin:0 14.45px;transform:scaleX(0.9921);">2-Day</span><div style="position:absolute;left:1043px;top:446.5px;width:84px;height:33px;box-sizing:border-box;border:2px solid #767676;border-radius:2px;background:#5500ff"></div><span class="t" style="left:794.70px;top:490.85px;font-family:'Liberation Sans';font-size:17px;line-height:17px;font-weight:400;color:#4b5061;transform-origin:0 14.45px;transform:scaleX(0.9921);">3-Day</span><div style="position:absolute;left:1043px;top:490.8px;width:84px;height:33px;box-sizing:border-box;border:2px solid #767676;border-radius:2px;background:#ff4500"></div><span class="t" style="left:794.70px;top:535.30px;font-family:'Liberation Sans';font-size:17px;line-height:17px;font-weight:400;color:#4b5061;transform-origin:0 14.45px;transform:scaleX(0.9921);">4-Day</span><div style="position:absolute;left:1043px;top:535.1px;width:84px;height:33px;box-sizing:border-box;border:2px solid #767676;border-radius:2px;background:#e6e60a"></div><span class="t" style="left:794.70px;top:579.75px;font-family:'Liberation Sans';font-size:17px;line-height:17px;font-weight:400;color:#4b5061;transform-origin:0 14.45px;transform:scaleX(0.9921);">5-Day</span><div style="position:absolute;left:1043px;top:579.4px;width:84px;height:33px;box-sizing:border-box;border:2px solid #767676;border-radius:2px;background:#800080"></div><span class="t" style="left:794.70px;top:624.20px;font-family:'Liberation Sans';font-size:17px;line-height:17px;font-weight:400;color:#4b5061;transform-origin:0 14.45px;transform:scaleX(0.9921);">6-Day</span><div style="position:absolute;left:1043px;top:623.7px;width:84px;height:33px;box-sizing:border-box;border:2px solid #767676;border-radius:2px;background:#ff00aa"></div><div style="position:absolute;left:793px;top:691px;width:164px;height:45px;box-sizing:border-box;border:1px solid #e3e5ea;border-radius:4px"></div><span class="t" style="left:809.00px;top:703.55px;font-family:'Liberation Sans';font-size:17px;line-height:17px;font-weight:400;color:#6b7087;transform-origin:0 14.45px;transform:scaleX(1.0424);">Restore Defaults</span><div style="position:absolute;left:977px;top:691px;width:150px;height:45px;border-radius:4px;background:#f4511e"></div><span class="t" style="left:993.00px;top:703.55px;font-family:'Liberation Sans';font-size:17px;line-height:17px;font-weight:400;color:#ffffff;transform-origin:0 14.45px;transform:scaleX(1.0152);font-weight:600">Save Changes</span>
<div style="position:absolute;left:1761px;top:1005px;width:134px;height:57px;border-radius:29px;background:#f4511e"></div>
<div style="position:absolute;left:1788px;top:1021px;width:20px;height:20px;border:2.5px solid #fff;border-radius:50%"></div>
<span class="t" style="left:1795.00px;top:1026.40px;font-family:'Liberation Sans';font-size:16px;line-height:16px;font-weight:700;color:#fff;">?</span>
<span class="t" style="left:1823.00px;top:1024.65px;font-family:'Liberation Sans';font-size:19px;line-height:19px;font-weight:700;color:#fff;transform-origin:0 16.15px;transform:scaleX(1.0440);">Help</span>
</body></html>
